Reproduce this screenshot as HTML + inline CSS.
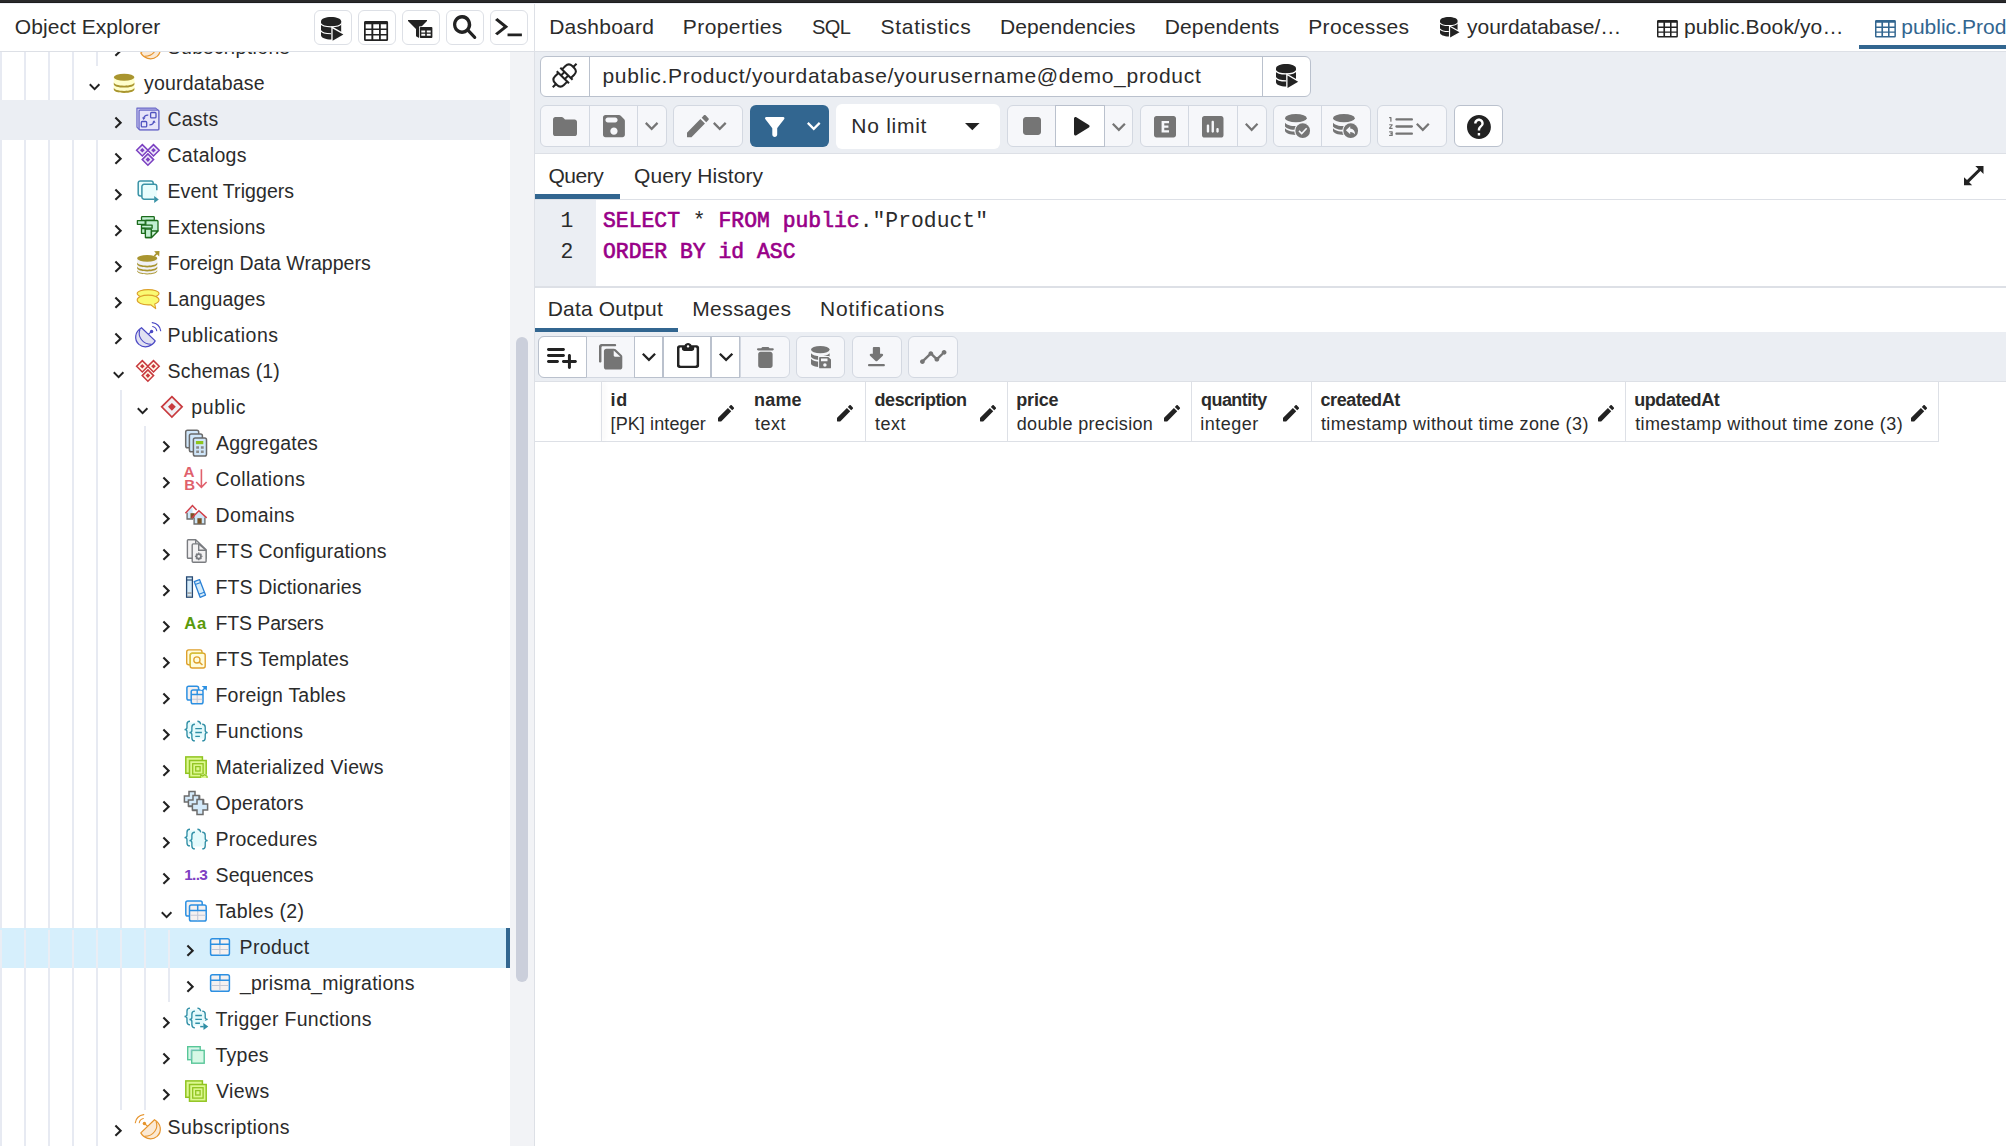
<!DOCTYPE html>
<html lang="en"><head><meta charset="utf-8"><title>pgAdmin 4</title>
<style>
html,body{margin:0;padding:0;background:#fff;}
body{width:2006px;height:1146px;overflow:hidden;position:relative;font-family:"Liberation Sans",sans-serif;color:#222;}
div,span.t,svg.i,i.g{position:absolute;}
span.t{white-space:nowrap;display:block;color:#2b2b2b;}
span.m{font-family:"Liberation Mono",monospace;}
i.g{width:1.8px;display:block;}
svg.i{display:block;overflow:visible;}
svg.ch{fill:none;stroke:#222;stroke-width:1.95;stroke-linecap:butt;stroke-linejoin:miter;z-index:4;}
svg.ti{z-index:4;}
#topbar{left:0;top:0;width:2006px;height:3px;background:linear-gradient(#29292b 0,#29292b 2px,#1d1d1f 2px,#1d1d1f 3px);border-bottom:1px solid #eef0f7;z-index:20;}
#left{left:0;top:0;width:535px;height:1146px;overflow:hidden;}
#tree{left:0;top:52px;width:510px;height:1094px;overflow:hidden;}
#tree>*{margin-top:-52px;}
#lhead{left:0;top:3px;width:534px;height:48px;background:#fff;border-bottom:1px solid #dde0e6;z-index:5;}
#left{border-right:1px solid #dde0e6;width:534px;}
#right{left:0;top:0;width:2006px;height:1146px;}
</style></head>
<body>
<div id="topbar"></div>
<div id="left">
<div id="tree">
<div style="left:0.00px;top:100.00px;width:510.00px;height:39.50px;background:#ebeef3;z-index:2"></div>
<div style="left:0.00px;top:928.00px;width:510.00px;height:40.00px;background:#d6effc;border-right:4px solid #326690;box-sizing:border-box;z-index:2"></div>
<i class="g" style="left:0px;top:29.8px;height:36px;background:#e7eaf2;z-index:1"></i>
<i class="g" style="left:24px;top:29.8px;height:36px;background:#e7eaf2;z-index:1"></i>
<i class="g" style="left:48px;top:29.8px;height:36px;background:#e7eaf2;z-index:1"></i>
<i class="g" style="left:72px;top:29.8px;height:36px;background:#e7eaf2;z-index:1"></i>
<i class="g" style="left:96px;top:29.8px;height:36px;background:#e7eaf2;z-index:1"></i>
<i class="g" style="left:0px;top:65.8px;height:36px;background:#e7eaf2;z-index:1"></i>
<i class="g" style="left:24px;top:65.8px;height:36px;background:#e7eaf2;z-index:1"></i>
<i class="g" style="left:48px;top:65.8px;height:36px;background:#e7eaf2;z-index:1"></i>
<i class="g" style="left:72px;top:65.8px;height:36px;background:#e7eaf2;z-index:1"></i>
<i class="g" style="left:0px;top:137.8px;height:36px;background:#e7eaf2;z-index:1"></i>
<i class="g" style="left:24px;top:137.8px;height:36px;background:#e7eaf2;z-index:1"></i>
<i class="g" style="left:48px;top:137.8px;height:36px;background:#e7eaf2;z-index:1"></i>
<i class="g" style="left:72px;top:137.8px;height:36px;background:#e7eaf2;z-index:1"></i>
<i class="g" style="left:96px;top:137.8px;height:36px;background:#e7eaf2;z-index:1"></i>
<i class="g" style="left:0px;top:173.8px;height:36px;background:#e7eaf2;z-index:1"></i>
<i class="g" style="left:24px;top:173.8px;height:36px;background:#e7eaf2;z-index:1"></i>
<i class="g" style="left:48px;top:173.8px;height:36px;background:#e7eaf2;z-index:1"></i>
<i class="g" style="left:72px;top:173.8px;height:36px;background:#e7eaf2;z-index:1"></i>
<i class="g" style="left:96px;top:173.8px;height:36px;background:#e7eaf2;z-index:1"></i>
<i class="g" style="left:0px;top:209.8px;height:36px;background:#e7eaf2;z-index:1"></i>
<i class="g" style="left:24px;top:209.8px;height:36px;background:#e7eaf2;z-index:1"></i>
<i class="g" style="left:48px;top:209.8px;height:36px;background:#e7eaf2;z-index:1"></i>
<i class="g" style="left:72px;top:209.8px;height:36px;background:#e7eaf2;z-index:1"></i>
<i class="g" style="left:96px;top:209.8px;height:36px;background:#e7eaf2;z-index:1"></i>
<i class="g" style="left:0px;top:245.8px;height:36px;background:#e7eaf2;z-index:1"></i>
<i class="g" style="left:24px;top:245.8px;height:36px;background:#e7eaf2;z-index:1"></i>
<i class="g" style="left:48px;top:245.8px;height:36px;background:#e7eaf2;z-index:1"></i>
<i class="g" style="left:72px;top:245.8px;height:36px;background:#e7eaf2;z-index:1"></i>
<i class="g" style="left:96px;top:245.8px;height:36px;background:#e7eaf2;z-index:1"></i>
<i class="g" style="left:0px;top:281.8px;height:36px;background:#e7eaf2;z-index:1"></i>
<i class="g" style="left:24px;top:281.8px;height:36px;background:#e7eaf2;z-index:1"></i>
<i class="g" style="left:48px;top:281.8px;height:36px;background:#e7eaf2;z-index:1"></i>
<i class="g" style="left:72px;top:281.8px;height:36px;background:#e7eaf2;z-index:1"></i>
<i class="g" style="left:96px;top:281.8px;height:36px;background:#e7eaf2;z-index:1"></i>
<i class="g" style="left:0px;top:317.8px;height:36px;background:#e7eaf2;z-index:1"></i>
<i class="g" style="left:24px;top:317.8px;height:36px;background:#e7eaf2;z-index:1"></i>
<i class="g" style="left:48px;top:317.8px;height:36px;background:#e7eaf2;z-index:1"></i>
<i class="g" style="left:72px;top:317.8px;height:36px;background:#e7eaf2;z-index:1"></i>
<i class="g" style="left:96px;top:317.8px;height:36px;background:#e7eaf2;z-index:1"></i>
<i class="g" style="left:0px;top:353.8px;height:36px;background:#e7eaf2;z-index:1"></i>
<i class="g" style="left:24px;top:353.8px;height:36px;background:#e7eaf2;z-index:1"></i>
<i class="g" style="left:48px;top:353.8px;height:36px;background:#e7eaf2;z-index:1"></i>
<i class="g" style="left:72px;top:353.8px;height:36px;background:#e7eaf2;z-index:1"></i>
<i class="g" style="left:96px;top:353.8px;height:36px;background:#e7eaf2;z-index:1"></i>
<i class="g" style="left:0px;top:389.8px;height:36px;background:#e7eaf2;z-index:1"></i>
<i class="g" style="left:24px;top:389.8px;height:36px;background:#e7eaf2;z-index:1"></i>
<i class="g" style="left:48px;top:389.8px;height:36px;background:#e7eaf2;z-index:1"></i>
<i class="g" style="left:72px;top:389.8px;height:36px;background:#e7eaf2;z-index:1"></i>
<i class="g" style="left:96px;top:389.8px;height:36px;background:#e7eaf2;z-index:1"></i>
<i class="g" style="left:120px;top:389.8px;height:36px;background:#e7eaf2;z-index:1"></i>
<i class="g" style="left:0px;top:425.8px;height:36px;background:#e7eaf2;z-index:1"></i>
<i class="g" style="left:24px;top:425.8px;height:36px;background:#e7eaf2;z-index:1"></i>
<i class="g" style="left:48px;top:425.8px;height:36px;background:#e7eaf2;z-index:1"></i>
<i class="g" style="left:72px;top:425.8px;height:36px;background:#e7eaf2;z-index:1"></i>
<i class="g" style="left:96px;top:425.8px;height:36px;background:#e7eaf2;z-index:1"></i>
<i class="g" style="left:120px;top:425.8px;height:36px;background:#e7eaf2;z-index:1"></i>
<i class="g" style="left:144px;top:425.8px;height:36px;background:#e7eaf2;z-index:1"></i>
<i class="g" style="left:0px;top:461.8px;height:36px;background:#e7eaf2;z-index:1"></i>
<i class="g" style="left:24px;top:461.8px;height:36px;background:#e7eaf2;z-index:1"></i>
<i class="g" style="left:48px;top:461.8px;height:36px;background:#e7eaf2;z-index:1"></i>
<i class="g" style="left:72px;top:461.8px;height:36px;background:#e7eaf2;z-index:1"></i>
<i class="g" style="left:96px;top:461.8px;height:36px;background:#e7eaf2;z-index:1"></i>
<i class="g" style="left:120px;top:461.8px;height:36px;background:#e7eaf2;z-index:1"></i>
<i class="g" style="left:144px;top:461.8px;height:36px;background:#e7eaf2;z-index:1"></i>
<i class="g" style="left:0px;top:497.8px;height:36px;background:#e7eaf2;z-index:1"></i>
<i class="g" style="left:24px;top:497.8px;height:36px;background:#e7eaf2;z-index:1"></i>
<i class="g" style="left:48px;top:497.8px;height:36px;background:#e7eaf2;z-index:1"></i>
<i class="g" style="left:72px;top:497.8px;height:36px;background:#e7eaf2;z-index:1"></i>
<i class="g" style="left:96px;top:497.8px;height:36px;background:#e7eaf2;z-index:1"></i>
<i class="g" style="left:120px;top:497.8px;height:36px;background:#e7eaf2;z-index:1"></i>
<i class="g" style="left:144px;top:497.8px;height:36px;background:#e7eaf2;z-index:1"></i>
<i class="g" style="left:0px;top:533.8px;height:36px;background:#e7eaf2;z-index:1"></i>
<i class="g" style="left:24px;top:533.8px;height:36px;background:#e7eaf2;z-index:1"></i>
<i class="g" style="left:48px;top:533.8px;height:36px;background:#e7eaf2;z-index:1"></i>
<i class="g" style="left:72px;top:533.8px;height:36px;background:#e7eaf2;z-index:1"></i>
<i class="g" style="left:96px;top:533.8px;height:36px;background:#e7eaf2;z-index:1"></i>
<i class="g" style="left:120px;top:533.8px;height:36px;background:#e7eaf2;z-index:1"></i>
<i class="g" style="left:144px;top:533.8px;height:36px;background:#e7eaf2;z-index:1"></i>
<i class="g" style="left:0px;top:569.8px;height:36px;background:#e7eaf2;z-index:1"></i>
<i class="g" style="left:24px;top:569.8px;height:36px;background:#e7eaf2;z-index:1"></i>
<i class="g" style="left:48px;top:569.8px;height:36px;background:#e7eaf2;z-index:1"></i>
<i class="g" style="left:72px;top:569.8px;height:36px;background:#e7eaf2;z-index:1"></i>
<i class="g" style="left:96px;top:569.8px;height:36px;background:#e7eaf2;z-index:1"></i>
<i class="g" style="left:120px;top:569.8px;height:36px;background:#e7eaf2;z-index:1"></i>
<i class="g" style="left:144px;top:569.8px;height:36px;background:#e7eaf2;z-index:1"></i>
<i class="g" style="left:0px;top:605.8px;height:36px;background:#e7eaf2;z-index:1"></i>
<i class="g" style="left:24px;top:605.8px;height:36px;background:#e7eaf2;z-index:1"></i>
<i class="g" style="left:48px;top:605.8px;height:36px;background:#e7eaf2;z-index:1"></i>
<i class="g" style="left:72px;top:605.8px;height:36px;background:#e7eaf2;z-index:1"></i>
<i class="g" style="left:96px;top:605.8px;height:36px;background:#e7eaf2;z-index:1"></i>
<i class="g" style="left:120px;top:605.8px;height:36px;background:#e7eaf2;z-index:1"></i>
<i class="g" style="left:144px;top:605.8px;height:36px;background:#e7eaf2;z-index:1"></i>
<i class="g" style="left:0px;top:641.8px;height:36px;background:#e7eaf2;z-index:1"></i>
<i class="g" style="left:24px;top:641.8px;height:36px;background:#e7eaf2;z-index:1"></i>
<i class="g" style="left:48px;top:641.8px;height:36px;background:#e7eaf2;z-index:1"></i>
<i class="g" style="left:72px;top:641.8px;height:36px;background:#e7eaf2;z-index:1"></i>
<i class="g" style="left:96px;top:641.8px;height:36px;background:#e7eaf2;z-index:1"></i>
<i class="g" style="left:120px;top:641.8px;height:36px;background:#e7eaf2;z-index:1"></i>
<i class="g" style="left:144px;top:641.8px;height:36px;background:#e7eaf2;z-index:1"></i>
<i class="g" style="left:0px;top:677.8px;height:36px;background:#e7eaf2;z-index:1"></i>
<i class="g" style="left:24px;top:677.8px;height:36px;background:#e7eaf2;z-index:1"></i>
<i class="g" style="left:48px;top:677.8px;height:36px;background:#e7eaf2;z-index:1"></i>
<i class="g" style="left:72px;top:677.8px;height:36px;background:#e7eaf2;z-index:1"></i>
<i class="g" style="left:96px;top:677.8px;height:36px;background:#e7eaf2;z-index:1"></i>
<i class="g" style="left:120px;top:677.8px;height:36px;background:#e7eaf2;z-index:1"></i>
<i class="g" style="left:144px;top:677.8px;height:36px;background:#e7eaf2;z-index:1"></i>
<i class="g" style="left:0px;top:713.8px;height:36px;background:#e7eaf2;z-index:1"></i>
<i class="g" style="left:24px;top:713.8px;height:36px;background:#e7eaf2;z-index:1"></i>
<i class="g" style="left:48px;top:713.8px;height:36px;background:#e7eaf2;z-index:1"></i>
<i class="g" style="left:72px;top:713.8px;height:36px;background:#e7eaf2;z-index:1"></i>
<i class="g" style="left:96px;top:713.8px;height:36px;background:#e7eaf2;z-index:1"></i>
<i class="g" style="left:120px;top:713.8px;height:36px;background:#e7eaf2;z-index:1"></i>
<i class="g" style="left:144px;top:713.8px;height:36px;background:#e7eaf2;z-index:1"></i>
<i class="g" style="left:0px;top:749.8px;height:36px;background:#e7eaf2;z-index:1"></i>
<i class="g" style="left:24px;top:749.8px;height:36px;background:#e7eaf2;z-index:1"></i>
<i class="g" style="left:48px;top:749.8px;height:36px;background:#e7eaf2;z-index:1"></i>
<i class="g" style="left:72px;top:749.8px;height:36px;background:#e7eaf2;z-index:1"></i>
<i class="g" style="left:96px;top:749.8px;height:36px;background:#e7eaf2;z-index:1"></i>
<i class="g" style="left:120px;top:749.8px;height:36px;background:#e7eaf2;z-index:1"></i>
<i class="g" style="left:144px;top:749.8px;height:36px;background:#e7eaf2;z-index:1"></i>
<i class="g" style="left:0px;top:785.8px;height:36px;background:#e7eaf2;z-index:1"></i>
<i class="g" style="left:24px;top:785.8px;height:36px;background:#e7eaf2;z-index:1"></i>
<i class="g" style="left:48px;top:785.8px;height:36px;background:#e7eaf2;z-index:1"></i>
<i class="g" style="left:72px;top:785.8px;height:36px;background:#e7eaf2;z-index:1"></i>
<i class="g" style="left:96px;top:785.8px;height:36px;background:#e7eaf2;z-index:1"></i>
<i class="g" style="left:120px;top:785.8px;height:36px;background:#e7eaf2;z-index:1"></i>
<i class="g" style="left:144px;top:785.8px;height:36px;background:#e7eaf2;z-index:1"></i>
<i class="g" style="left:0px;top:821.8px;height:36px;background:#e7eaf2;z-index:1"></i>
<i class="g" style="left:24px;top:821.8px;height:36px;background:#e7eaf2;z-index:1"></i>
<i class="g" style="left:48px;top:821.8px;height:36px;background:#e7eaf2;z-index:1"></i>
<i class="g" style="left:72px;top:821.8px;height:36px;background:#e7eaf2;z-index:1"></i>
<i class="g" style="left:96px;top:821.8px;height:36px;background:#e7eaf2;z-index:1"></i>
<i class="g" style="left:120px;top:821.8px;height:36px;background:#e7eaf2;z-index:1"></i>
<i class="g" style="left:144px;top:821.8px;height:36px;background:#e7eaf2;z-index:1"></i>
<i class="g" style="left:0px;top:857.8px;height:36px;background:#e7eaf2;z-index:1"></i>
<i class="g" style="left:24px;top:857.8px;height:36px;background:#e7eaf2;z-index:1"></i>
<i class="g" style="left:48px;top:857.8px;height:36px;background:#e7eaf2;z-index:1"></i>
<i class="g" style="left:72px;top:857.8px;height:36px;background:#e7eaf2;z-index:1"></i>
<i class="g" style="left:96px;top:857.8px;height:36px;background:#e7eaf2;z-index:1"></i>
<i class="g" style="left:120px;top:857.8px;height:36px;background:#e7eaf2;z-index:1"></i>
<i class="g" style="left:144px;top:857.8px;height:36px;background:#e7eaf2;z-index:1"></i>
<i class="g" style="left:0px;top:893.8px;height:36px;background:#e7eaf2;z-index:1"></i>
<i class="g" style="left:24px;top:893.8px;height:36px;background:#e7eaf2;z-index:1"></i>
<i class="g" style="left:48px;top:893.8px;height:36px;background:#e7eaf2;z-index:1"></i>
<i class="g" style="left:72px;top:893.8px;height:36px;background:#e7eaf2;z-index:1"></i>
<i class="g" style="left:96px;top:893.8px;height:36px;background:#e7eaf2;z-index:1"></i>
<i class="g" style="left:120px;top:893.8px;height:36px;background:#e7eaf2;z-index:1"></i>
<i class="g" style="left:144px;top:893.8px;height:36px;background:#e7eaf2;z-index:1"></i>
<i class="g" style="left:0px;top:929.8px;height:38.2px;background:#eaedf4;z-index:3"></i>
<i class="g" style="left:24px;top:929.8px;height:38.2px;background:#eaedf4;z-index:3"></i>
<i class="g" style="left:48px;top:929.8px;height:38.2px;background:#eaedf4;z-index:3"></i>
<i class="g" style="left:72px;top:929.8px;height:38.2px;background:#eaedf4;z-index:3"></i>
<i class="g" style="left:96px;top:929.8px;height:38.2px;background:#eaedf4;z-index:3"></i>
<i class="g" style="left:120px;top:929.8px;height:38.2px;background:#eaedf4;z-index:3"></i>
<i class="g" style="left:144px;top:929.8px;height:38.2px;background:#eaedf4;z-index:3"></i>
<i class="g" style="left:168px;top:929.8px;height:38.2px;background:#eaedf4;z-index:3"></i>
<i class="g" style="left:0px;top:965.8px;height:36px;background:#e7eaf2;z-index:1"></i>
<i class="g" style="left:24px;top:965.8px;height:36px;background:#e7eaf2;z-index:1"></i>
<i class="g" style="left:48px;top:965.8px;height:36px;background:#e7eaf2;z-index:1"></i>
<i class="g" style="left:72px;top:965.8px;height:36px;background:#e7eaf2;z-index:1"></i>
<i class="g" style="left:96px;top:965.8px;height:36px;background:#e7eaf2;z-index:1"></i>
<i class="g" style="left:120px;top:965.8px;height:36px;background:#e7eaf2;z-index:1"></i>
<i class="g" style="left:144px;top:965.8px;height:36px;background:#e7eaf2;z-index:1"></i>
<i class="g" style="left:168px;top:965.8px;height:36px;background:#e7eaf2;z-index:1"></i>
<i class="g" style="left:0px;top:1001.8px;height:36px;background:#e7eaf2;z-index:1"></i>
<i class="g" style="left:24px;top:1001.8px;height:36px;background:#e7eaf2;z-index:1"></i>
<i class="g" style="left:48px;top:1001.8px;height:36px;background:#e7eaf2;z-index:1"></i>
<i class="g" style="left:72px;top:1001.8px;height:36px;background:#e7eaf2;z-index:1"></i>
<i class="g" style="left:96px;top:1001.8px;height:36px;background:#e7eaf2;z-index:1"></i>
<i class="g" style="left:120px;top:1001.8px;height:36px;background:#e7eaf2;z-index:1"></i>
<i class="g" style="left:144px;top:1001.8px;height:36px;background:#e7eaf2;z-index:1"></i>
<i class="g" style="left:0px;top:1037.8px;height:36px;background:#e7eaf2;z-index:1"></i>
<i class="g" style="left:24px;top:1037.8px;height:36px;background:#e7eaf2;z-index:1"></i>
<i class="g" style="left:48px;top:1037.8px;height:36px;background:#e7eaf2;z-index:1"></i>
<i class="g" style="left:72px;top:1037.8px;height:36px;background:#e7eaf2;z-index:1"></i>
<i class="g" style="left:96px;top:1037.8px;height:36px;background:#e7eaf2;z-index:1"></i>
<i class="g" style="left:120px;top:1037.8px;height:36px;background:#e7eaf2;z-index:1"></i>
<i class="g" style="left:144px;top:1037.8px;height:36px;background:#e7eaf2;z-index:1"></i>
<i class="g" style="left:0px;top:1073.8px;height:36px;background:#e7eaf2;z-index:1"></i>
<i class="g" style="left:24px;top:1073.8px;height:36px;background:#e7eaf2;z-index:1"></i>
<i class="g" style="left:48px;top:1073.8px;height:36px;background:#e7eaf2;z-index:1"></i>
<i class="g" style="left:72px;top:1073.8px;height:36px;background:#e7eaf2;z-index:1"></i>
<i class="g" style="left:96px;top:1073.8px;height:36px;background:#e7eaf2;z-index:1"></i>
<i class="g" style="left:120px;top:1073.8px;height:36px;background:#e7eaf2;z-index:1"></i>
<i class="g" style="left:144px;top:1073.8px;height:36px;background:#e7eaf2;z-index:1"></i>
<i class="g" style="left:0px;top:1109.8px;height:36px;background:#e7eaf2;z-index:1"></i>
<i class="g" style="left:24px;top:1109.8px;height:36px;background:#e7eaf2;z-index:1"></i>
<i class="g" style="left:48px;top:1109.8px;height:36px;background:#e7eaf2;z-index:1"></i>
<i class="g" style="left:72px;top:1109.8px;height:36px;background:#e7eaf2;z-index:1"></i>
<i class="g" style="left:96px;top:1109.8px;height:36px;background:#e7eaf2;z-index:1"></i>
<svg class="i ch" viewBox="0 0 8 12" style="left:114.1px;top:44.0px;width:8.6px;height:13.4px"><path d="M1.3 1.2 6.2 6 1.3 10.8"/></svg>
<svg class="i ti" viewBox="0 0 24 24" style="left:136px;top:35px;width:24px;height:24px"><g transform="translate(24 0) scale(-1 1)"><path d="M5.5 4.7 19.2 17.9C16.5 22.9 9 26.3 2.9 21.4-2.2 16.6-1.2 8.6 5.5 4.7z" fill="#fbe9d4" stroke="#e6942c" stroke-width="1.2" stroke-linejoin="round"/><path d="M4 6.2C1.2 13.5 6.5 21.4 15.6 21.3" fill="none" stroke="#e6942c" stroke-width="1.1"/><path d="M12.4 11.2 15.2 8.9" stroke="#e6942c" stroke-width="1.2"/><circle cx="15.6" cy="8.5" r="1.7" fill="#e6942c"/><path d="M16.7 3.5c2.3.6 3.7 2.1 4 4.3M16.2-.4c4.6.6 7.8 3.6 8.5 8.2" fill="none" stroke="#e6942c" stroke-width="1.1" stroke-linecap="round"/></g></svg>
<span class="t" style="left:167.61px;top:38.00px;font-size:19.5px;line-height:19.5px;letter-spacing:0.403px;z-index:4;">Subscriptions</span>
<svg class="i ch" viewBox="0 0 12 8" style="left:87.5px;top:82.6px;width:13.2px;height:8px"><path d="M1.2 1.3 6 6.1 10.8 1.3"/></svg>
<svg class="i ti" viewBox="0 0 24 24" style="left:112px;top:71px;width:24px;height:24px"><path d="M1.8 6.2v12.3c0 1.9 4.6 3.4 10.3 3.4s10.3-1.500 10.300-3.400V6.200z" fill="#ffffcc"/><ellipse cx="12.100" cy="6.200" rx="10.300" ry="3.500" fill="#a9952f"/><path d="M1.8 11.300c0 1.900 4.600 3.400 10.300 3.400s10.300-1.500 10.300-3.400v1.900c0 1.900-4.600 3.400-10.300 3.400S1.800 15.100 1.800 13.200zM1.800 16.600c0 1.900 4.600 3.400 10.300 3.400s10.300-1.500 10.300-3.400v1.900c0 1.900-4.600 3.400-10.300 3.400S1.800 20.400 1.800 18.500z" fill="#a9952f"/></svg>
<span class="t" style="left:143.95px;top:74.00px;font-size:19.5px;line-height:19.5px;letter-spacing:0.231px;z-index:4;">yourdatabase</span>
<svg class="i ch" viewBox="0 0 8 12" style="left:114.1px;top:116.0px;width:8.6px;height:13.4px"><path d="M1.3 1.2 6.2 6 1.3 10.8"/></svg>
<svg class="i ti" viewBox="0 0 24 24" style="left:136px;top:107px;width:24px;height:24px"><path d="M.9 1.100h18.800l3.100 2.600v19h-19.400l-2.500-2.600z" fill="#c9c6ef" stroke="#6a68c8" stroke-width="1.100" stroke-linejoin="round"/><rect x="3.100" y="3.100" width="19.700" height="19.700" rx="1" fill="#e6e4fa" stroke="#6a68c8" stroke-width="1.200"/><rect x="14.600" y="5.500" width="5.400" height="5.400" rx="1" fill="none" stroke="#4f52c0" stroke-width="1.300"/><rect x="5.300" y="14.500" width="5.400" height="5.400" rx="1" fill="none" stroke="#4f52c0" stroke-width="1.300"/><path d="M12.300 8.100c-2.600-.2-4.200 1-4.700 3.300M13.400 17.900c2.500.1 4-1 4.600-3.200" fill="none" stroke="#4f52c0" stroke-width="1.300"/><path d="M6 10.400 7.600 12.900 9.600 10.600zM19.700 15.700 18.100 13.200 16.100 15.500z" fill="#4f52c0"/></svg>
<span class="t" style="left:167.51px;top:110.00px;font-size:19.5px;line-height:19.5px;letter-spacing:0.212px;z-index:4;">Casts</span>
<svg class="i ch" viewBox="0 0 8 12" style="left:114.1px;top:152.0px;width:8.6px;height:13.4px"><path d="M1.3 1.2 6.2 6 1.3 10.8"/></svg>
<svg class="i ti" viewBox="0 0 24 24" style="left:136px;top:143px;width:24px;height:24px"><path d="M6.3 1.5999999999999996L12.0 7.3L6.3 13.0L0.5999999999999996 7.3z" fill="#ece6fa" stroke="#7b40c1" stroke-width="1.5" stroke-linejoin="miter"/><path d="M6.3 5.0L8.6 7.3L6.3 9.6L4.0 7.3z" fill="#7b40c1"/><path d="M17.5 1.5999999999999996L23.2 7.3L17.5 13.0L11.8 7.3z" fill="#ece6fa" stroke="#7b40c1" stroke-width="1.5" stroke-linejoin="miter"/><path d="M17.5 5.0L19.8 7.3L17.5 9.6L15.2 7.3z" fill="#7b40c1"/><path d="M11.9 10.900000000000002L17.6 16.6L11.9 22.3L6.2 16.6z" fill="#ece6fa" stroke="#7b40c1" stroke-width="1.5" stroke-linejoin="miter"/><path d="M11.9 14.3L14.2 16.6L11.9 18.900000000000002L9.600000000000001 16.6z" fill="#7b40c1"/></svg>
<span class="t" style="left:167.51px;top:146.00px;font-size:19.5px;line-height:19.5px;letter-spacing:0.290px;z-index:4;">Catalogs</span>
<svg class="i ch" viewBox="0 0 8 12" style="left:114.1px;top:188.0px;width:8.6px;height:13.4px"><path d="M1.3 1.2 6.2 6 1.3 10.8"/></svg>
<svg class="i ti" viewBox="0 0 24 24" style="left:136px;top:179px;width:24px;height:24px"><rect x="2.200" y="1.900" width="15" height="15.100" rx="2.200" fill="#e8fdfd" stroke="#3a93a7" stroke-width="1.500"/><rect x="5.900" y="5.300" width="14.900" height="14.900" rx="2.200" fill="#e8fdfd"/><path d="M20.800 11.300V7.500a2.200 2.200 0 0 0-2.200-2.200H8.100a2.200 2.200 0 0 0-2.200 2.200V18a2.200 2.200 0 0 0 2.200 2.200h10.400" fill="none" stroke="#3a93a7" stroke-width="1.500"/><path d="M18.200 16.900 22.800 20.400 18.200 23.900z" fill="#3a93a7"/></svg>
<span class="t" style="left:167.50px;top:182.00px;font-size:19.5px;line-height:19.5px;letter-spacing:0.068px;z-index:4;">Event Triggers</span>
<svg class="i ch" viewBox="0 0 8 12" style="left:114.1px;top:224.0px;width:8.6px;height:13.4px"><path d="M1.3 1.2 6.2 6 1.3 10.8"/></svg>
<svg class="i ti" viewBox="0 0 24 24" style="left:136px;top:215px;width:24px;height:24px"><g fill="#c2efd2" stroke="#1c6b1c" stroke-width="1.300" stroke-linejoin="round"><rect x="5.500" y="1.600" width="12.800" height="3.700" rx=".8"/><path d="M9.800 5.500h11.200q1 0 1 1v9.300l-6.700 6.700h-5.500z"/><rect x="1.400" y="5.700" width="7.800" height="3.600"/><rect x="5.500" y="10.100" width="10.600" height="3.100"/><rect x="5.500" y="13.500" width="3.700" height="4.800"/><rect x="9.400" y="14.100" width="5.900" height="8.400"/><path d="M15.500 22.500v-6.500h6.500z" fill="#d4f6e0"/></g></svg>
<span class="t" style="left:167.50px;top:218.00px;font-size:19.5px;line-height:19.5px;letter-spacing:0.269px;z-index:4;">Extensions</span>
<svg class="i ch" viewBox="0 0 8 12" style="left:114.1px;top:260.0px;width:8.6px;height:13.4px"><path d="M1.3 1.2 6.2 6 1.3 10.8"/></svg>
<svg class="i ti" viewBox="0 0 24 24" style="left:136px;top:251px;width:24px;height:24px"><path d="M1.100 7.300v11.800c0 1.900 4.500 3.400 10.100 3.400s10.100-1.500 10.100-3.400V7.300z" fill="#f1f1f6"/><ellipse cx="11.200" cy="7.300" rx="10.100" ry="3.400" fill="#a9952f"/><path d="M1.100 11.300c0 1.900 4.500 3.400 10.100 3.400s10.100-1.500 10.100-3.400v1.700c0 1.900-4.500 3.400-10.100 3.400S1.100 14.900 1.100 13zM1.100 15.300c0 1.900 4.500 3.400 10.100 3.400s10.100-1.500 10.100-3.400v1.700c0 1.900-4.500 3.400-10.100 3.400s-10.100-1.500-10.100-3.400zM1.100 19c0 1.900 4.500 3.400 10.100 3.400s10.100-1.500 10.100-3.400v1c0 1.900-4.500 3.400-10.100 3.400S1.100 21.900 1.100 20z" fill="#a9952f"/><path d="M18.400 5 22 1.400" stroke="#a9952f" stroke-width="1.600"/><path d="M18.100.2 23.500 0 23.200 5.600z" fill="#a9952f"/></svg>
<span class="t" style="left:167.50px;top:254.00px;font-size:19.5px;line-height:19.5px;letter-spacing:0.050px;z-index:4;">Foreign Data Wrappers</span>
<svg class="i ch" viewBox="0 0 8 12" style="left:114.1px;top:296.0px;width:8.6px;height:13.4px"><path d="M1.3 1.2 6.2 6 1.3 10.8"/></svg>
<svg class="i ti" viewBox="0 0 24 24" style="left:136px;top:287px;width:24px;height:24px"><ellipse cx="12.100" cy="6.600" rx="10.900" ry="4" fill="#fafa72" stroke="#dca02a" stroke-width="1.100"/><path d="M12.100 8.100c6 0 10.900 2.200 10.900 4.900 0 1.600-1.700 3-4.300 3.900l1 4.700-5-3.900c-.8.100-1.700.2-2.600.2-6 0-10.900-2.200-10.900-4.900s4.900-4.900 10.900-4.900z" fill="#fafa72" stroke="#dca02a" stroke-width="1.100" stroke-linejoin="round"/></svg>
<span class="t" style="left:167.50px;top:290.00px;font-size:19.5px;line-height:19.5px;letter-spacing:0.162px;z-index:4;">Languages</span>
<svg class="i ch" viewBox="0 0 8 12" style="left:114.1px;top:332.0px;width:8.6px;height:13.4px"><path d="M1.3 1.2 6.2 6 1.3 10.8"/></svg>
<svg class="i ti" viewBox="0 0 24 24" style="left:136px;top:323px;width:24px;height:24px"><g><path d="M5.5 4.7 19.2 17.9C16.5 22.9 9 26.3 2.9 21.4-2.2 16.6-1.2 8.6 5.5 4.7z" fill="#e1e1f2" stroke="#4a48c4" stroke-width="1.2" stroke-linejoin="round"/><path d="M4 6.2C1.2 13.5 6.5 21.4 15.6 21.3" fill="none" stroke="#4a48c4" stroke-width="1.1"/><path d="M12.4 11.2 15.2 8.9" stroke="#4a48c4" stroke-width="1.2"/><circle cx="15.6" cy="8.5" r="1.7" fill="#4a48c4"/><path d="M16.7 3.5c2.3.6 3.7 2.1 4 4.3M16.2-.4c4.6.6 7.8 3.6 8.5 8.2" fill="none" stroke="#4a48c4" stroke-width="1.1" stroke-linecap="round"/></g></svg>
<span class="t" style="left:167.50px;top:326.00px;font-size:19.5px;line-height:19.5px;letter-spacing:0.487px;z-index:4;">Publications</span>
<svg class="i ch" viewBox="0 0 12 8" style="left:111.5px;top:370.6px;width:13.2px;height:8px"><path d="M1.2 1.3 6 6.1 10.8 1.3"/></svg>
<svg class="i ti" viewBox="0 0 24 24" style="left:136px;top:359px;width:24px;height:24px"><path d="M6.3 1.5999999999999996L12.0 7.3L6.3 13.0L0.5999999999999996 7.3z" fill="#fff6e6" stroke="#c83a3e" stroke-width="1.5" stroke-linejoin="miter"/><path d="M6.3 5.0L8.6 7.3L6.3 9.6L4.0 7.3z" fill="#c83a3e"/><path d="M17.5 1.5999999999999996L23.2 7.3L17.5 13.0L11.8 7.3z" fill="#fff6e6" stroke="#c83a3e" stroke-width="1.5" stroke-linejoin="miter"/><path d="M17.5 5.0L19.8 7.3L17.5 9.6L15.2 7.3z" fill="#c83a3e"/><path d="M11.9 10.900000000000002L17.6 16.6L11.9 22.3L6.2 16.6z" fill="#fff6e6" stroke="#c83a3e" stroke-width="1.5" stroke-linejoin="miter"/><path d="M11.9 14.3L14.2 16.6L11.9 18.900000000000002L9.600000000000001 16.6z" fill="#c83a3e"/></svg>
<span class="t" style="left:167.61px;top:362.00px;font-size:19.5px;line-height:19.5px;letter-spacing:0.166px;z-index:4;">Schemas (1)</span>
<svg class="i ch" viewBox="0 0 12 8" style="left:135.5px;top:406.6px;width:13.2px;height:8px"><path d="M1.2 1.3 6 6.1 10.8 1.3"/></svg>
<svg class="i ti" viewBox="0 0 24 24" style="left:160px;top:395px;width:24px;height:24px"><path d="M11.9 1.6000000000000014L22.1 11.8L11.9 22.0L1.700000000000001 11.8z" fill="#f1f1f5" stroke="#c83a3e" stroke-width="1.7" stroke-linejoin="miter"/><path d="M11.9 7.9L15.8 11.8L11.9 15.700000000000001L8.0 11.8z" fill="#c83a3e"/></svg>
<span class="t" style="left:191.34px;top:398.00px;font-size:19.5px;line-height:19.5px;letter-spacing:0.644px;z-index:4;">public</span>
<svg class="i ch" viewBox="0 0 8 12" style="left:162.1px;top:440.0px;width:8.6px;height:13.4px"><path d="M1.3 1.2 6.2 6 1.3 10.8"/></svg>
<svg class="i ti" viewBox="0 0 24 24" style="left:184px;top:431px;width:24px;height:24px"><g fill="#cfe6fa" stroke="#6a6a6a" stroke-width="1.500"><rect x="1.700" y="-.8" width="13" height="17.500" rx="1.800"/><rect x="5.400" y="2.900" width="13" height="17.800" rx="1.800"/><rect x="9.400" y="6.900" width="13.100" height="18.100" rx="1.800"/></g><rect x="11.900" y="10" width="7.400" height="3.200" fill="#8dc41e"/><path d="M12.200 15.200h2.800v2.500h-2.800zM16.900 15.200h2.800v2.500h-2.800zM12.200 19.400h2.800v2.500h-2.800zM16.900 19.400h2.800v2.500h-2.800z" fill="#8a8a8a"/></svg>
<span class="t" style="left:215.96px;top:434.00px;font-size:19.5px;line-height:19.5px;letter-spacing:0.234px;z-index:4;">Aggregates</span>
<svg class="i ch" viewBox="0 0 8 12" style="left:162.1px;top:476.0px;width:8.6px;height:13.4px"><path d="M1.3 1.2 6.2 6 1.3 10.8"/></svg>
<svg class="i ti" viewBox="0 0 24 24" style="left:184px;top:467px;width:24px;height:24px"><text x="-.4" y="10" font-family="Liberation Sans,sans-serif" font-weight="700" font-size="15.300" fill="#e0606c">A</text><text x=".2" y="22.900" font-family="Liberation Sans,sans-serif" font-weight="700" font-size="15" fill="#e0606c">B</text><path d="M17.400 2.200V20M12.200 15 17.400 20.400 22.600 15" fill="none" stroke="#e0606c" stroke-width="1.600"/></svg>
<span class="t" style="left:215.51px;top:470.00px;font-size:19.5px;line-height:19.5px;letter-spacing:0.419px;z-index:4;">Collations</span>
<svg class="i ch" viewBox="0 0 8 12" style="left:162.1px;top:512.0px;width:8.6px;height:13.4px"><path d="M1.3 1.2 6.2 6 1.3 10.8"/></svg>
<svg class="i ti" viewBox="0 0 24 24" style="left:184px;top:503px;width:24px;height:24px"><path d="M3.100 9.400V16h5.500V9.400L8.400 4z" fill="#cde6f8"/><path d="M3.100 9.800V16h6" fill="none" stroke="#6e6e6e" stroke-width="1.400"/><rect x="6.500" y="10.200" width="4.200" height="5.200" fill="#7a5426"/><path d="M1.400 10.200 8.450 2.600 12.600 7" fill="none" stroke="#d0404a" stroke-width="1.500"/><path d="M10.100 14.200 14.900 8.700 20.900 14.200v6.800H10.100z" fill="#cde6f8"/><path d="M10.100 14.600V21h10.800v-6.400" fill="none" stroke="#6e6e6e" stroke-width="1.400"/><rect x="13.400" y="15.200" width="4.300" height="5.500" fill="#7a5426"/><path d="M7.900 15 14.900 7.700 22.700 14.900" fill="none" stroke="#d0404a" stroke-width="1.500"/></svg>
<span class="t" style="left:215.50px;top:506.00px;font-size:19.5px;line-height:19.5px;letter-spacing:0.360px;z-index:4;">Domains</span>
<svg class="i ch" viewBox="0 0 8 12" style="left:162.1px;top:548.0px;width:8.6px;height:13.4px"><path d="M1.3 1.2 6.2 6 1.3 10.8"/></svg>
<svg class="i ti" viewBox="0 0 24 24" style="left:184px;top:539px;width:24px;height:24px"><path d="M4.200.7h7.500l10.400 10v8.500H4.200q-.8 0-.8-.8V1.500q0-.8.800-.8z" fill="#f3f2f3" stroke="#7a7c80" stroke-width="1.400" stroke-linejoin="round"/><path d="M9.200 4.900h5.500l7.400 6.300v11q0 1-1 1H9.200q-1 0-1-1V5.900q0-1 1-1z" fill="#f3f2f3" stroke="#7a7c80" stroke-width="1.400" stroke-linejoin="round"/><path d="M11.700.9v3.800M14.700 4.900v6.300h7.300" fill="none" stroke="#7a7c80" stroke-width="1.400"/><circle cx="14.7" cy="17.4" r="2.23" fill="none" stroke="#7a7c80" stroke-width="1.80"/><path d="M17.40 17.40L18.48 17.40M16.61 19.31L17.37 20.07M14.70 20.10L14.70 21.18M12.79 19.31L12.03 20.07M12.00 17.40L10.92 17.40M12.79 15.49L12.03 14.73M14.70 14.70L14.70 13.62M16.61 15.49L17.37 14.73" stroke="#7a7c80" stroke-width="1.350" fill="none"/></svg>
<span class="t" style="left:215.50px;top:542.00px;font-size:19.5px;line-height:19.5px;letter-spacing:0.172px;z-index:4;">FTS Configurations</span>
<svg class="i ch" viewBox="0 0 8 12" style="left:162.1px;top:584.0px;width:8.6px;height:13.4px"><path d="M1.3 1.2 6.2 6 1.3 10.8"/></svg>
<svg class="i ti" viewBox="0 0 24 24" style="left:184px;top:575px;width:24px;height:24px"><rect x="2.600" y="1.900" width="5.800" height="20.300" fill="#d6ecfa" stroke="#274a74" stroke-width="1.300"/><path d="M2.600 5h5.800" stroke="#274a74" stroke-width="1.100"/><rect x="3.300" y="17.300" width="4.400" height="1.500" fill="#9c9c9c"/><rect x="3.300" y="20.700" width="4.400" height="1" fill="#9c9c9c"/><path d="M10.200 6.600 15.500 4.600 21.500 20.100 16.100 22.300z" fill="#d6ecfa" stroke="#2a80d6" stroke-width="1.300" stroke-linejoin="round"/><path d="M11.300 9.600 16.700 7.600M15 19.300 20.300 17.200" stroke="#2a80d6" stroke-width="1.100"/></svg>
<span class="t" style="left:215.50px;top:578.00px;font-size:19.5px;line-height:19.5px;letter-spacing:0.119px;z-index:4;">FTS Dictionaries</span>
<svg class="i ch" viewBox="0 0 8 12" style="left:162.1px;top:620.0px;width:8.6px;height:13.4px"><path d="M1.3 1.2 6.2 6 1.3 10.8"/></svg>
<svg class="i ti" viewBox="0 0 24 24" style="left:184px;top:611px;width:24px;height:24px"><text x=".3" y="17.900" font-family="Liberation Sans,sans-serif" font-weight="700" font-size="16.600" letter-spacing=".7" fill="#5a9a0a">Aa</text></svg>
<span class="t" style="left:215.50px;top:614.00px;font-size:19.5px;line-height:19.5px;letter-spacing:-0.123px;z-index:4;">FTS Parsers</span>
<svg class="i ch" viewBox="0 0 8 12" style="left:162.1px;top:656.0px;width:8.6px;height:13.4px"><path d="M1.3 1.2 6.2 6 1.3 10.8"/></svg>
<svg class="i ti" viewBox="0 0 24 24" style="left:184px;top:647px;width:24px;height:24px"><rect x="2.700" y="2.900" width="15.300" height="14.800" rx="2" fill="#fffcdc" stroke="#dea02c" stroke-width="1.400"/><rect x="6.200" y="6.200" width="15" height="14.800" rx="2" fill="#fffcdc" stroke="#dea02c" stroke-width="1.400"/><path d="M6.200 19V8.200q0-2 2-2h11" fill="none" stroke="#d6c23c" stroke-width="1.400"/><circle cx="12.900" cy="12.900" r="3.100" fill="none" stroke="#dea02c" stroke-width="1.300"/><path d="M15.200 15.100 18.500 18" stroke="#dea02c" stroke-width="1.400"/></svg>
<span class="t" style="left:215.50px;top:650.00px;font-size:19.5px;line-height:19.5px;letter-spacing:0.203px;z-index:4;">FTS Templates</span>
<svg class="i ch" viewBox="0 0 8 12" style="left:162.1px;top:692.0px;width:8.6px;height:13.4px"><path d="M1.3 1.2 6.2 6 1.3 10.8"/></svg>
<svg class="i ti" viewBox="0 0 24 24" style="left:184px;top:683px;width:24px;height:24px"><rect x="2.900" y="3.200" width="11.700" height="13.800" rx="1.800" fill="#f6f0ee" stroke="#2c90e2" stroke-width="1.500"/><rect x="7.200" y="6.900" width="11.800" height="13.800" rx="1.800" fill="#f6f0ee" stroke="#2c90e2" stroke-width="1.500"/><path d="M13.200 11.400V20M8 16.200h10.300" stroke="#c3c8d6" stroke-width="1.100"/><path d="M13.200 7V11.400M7.200 11.400H19" stroke="#2c90e2" stroke-width="1.500"/><path d="M16.400 6.900 17.200 3.600 19.700 6.600" fill="#fff"/><path d="M18.800 7.200 21.800 4.100" stroke="#2c90e2" stroke-width="1.500"/><path d="M17.700 3.100 23 2.900 22.800 7.800z" fill="#2c90e2"/></svg>
<span class="t" style="left:215.50px;top:686.00px;font-size:19.5px;line-height:19.5px;letter-spacing:0.212px;z-index:4;">Foreign Tables</span>
<svg class="i ch" viewBox="0 0 8 12" style="left:162.1px;top:728.0px;width:8.6px;height:13.4px"><path d="M1.3 1.2 6.2 6 1.3 10.8"/></svg>
<svg class="i ti" viewBox="0 0 24 24" style="left:184px;top:719px;width:24px;height:24px"><g transform="translate(0 0)"><path d="M3 3.500h11l2 3h4.500v13h-13v-3H3z" fill="#e4fafc"/><path d="M6 2.2q-3.0250000000000004 0 -3.0250000000000004 3v3.35q0 2 -2.47 2q2.47 0 2.47 2v3.35q0 3 3.0250000000000004 3M13.4 2.2q3 0 3.300 3.200" fill="none" stroke="#2f8fa6" stroke-width="1.350"/><path d="M10.9 5.2q-3.0250000000000004 0 -3.0250000000000004 3v3.35q0 2 -2.47 2q2.47 0 2.47 2v3.35q0 3 3.0250000000000004 3" fill="none" stroke="#2f8fa6" stroke-width="1.350"/><path d="M18.2 5.2q3.0250000000000004 0 3.0250000000000004 3v3.35q0 2 2.47 2q-2.47 0 -2.47 2v3.35q0 3 -3.0250000000000004 3" fill="none" stroke="#2f8fa6" stroke-width="1.350"/><path d="M11.3 9.600h6.600M11.300 13.500h6.600M11.300 17.400h4.600" stroke="#2f8fa6" stroke-width="1.400" fill="none"/></g></svg>
<span class="t" style="left:215.50px;top:722.00px;font-size:19.5px;line-height:19.5px;letter-spacing:0.370px;z-index:4;">Functions</span>
<svg class="i ch" viewBox="0 0 8 12" style="left:162.1px;top:764.0px;width:8.6px;height:13.4px"><path d="M1.3 1.2 6.2 6 1.3 10.8"/></svg>
<svg class="i ti" viewBox="0 0 24 24" style="left:184px;top:755px;width:24px;height:24px"><rect x="1.8" y="1.900" width="16.600" height="16.400" fill="#dcf890" stroke="#90c420" stroke-width="1.5"/><rect x="5.500" y="5.500" width="16.700" height="16.700" fill="#dcf890" stroke="#90c420" stroke-width="1.5"/><rect x="8.700" y="8.700" width="10.400" height="10.400" fill="none" stroke="#90c420" stroke-width="1.3"/><rect x="11.700" y="11.600" width="4.400" height="4.400" fill="none" stroke="#90c420" stroke-width="1.3"/><path d="M16.800 19.700h6.300v3.500h-6.300z" fill="#fff"/><path d="M16.700 23v-3.300l2 1.300 2-1.300 2.400 1.500V23" fill="#dcf890" stroke="#90c420" stroke-width="1.100"/></svg>
<span class="t" style="left:215.50px;top:758.00px;font-size:19.5px;line-height:19.5px;letter-spacing:0.341px;z-index:4;">Materialized Views</span>
<svg class="i ch" viewBox="0 0 8 12" style="left:162.1px;top:800.0px;width:8.6px;height:13.4px"><path d="M1.3 1.2 6.2 6 1.3 10.8"/></svg>
<svg class="i ti" viewBox="0 0 24 24" style="left:184px;top:791px;width:24px;height:24px"><path d="M5 0.40000000000000036h6v4.600h4.600v6h-4.600v4.600h-6v-4.600h-4.600v-6h4.600z" fill="#d4eafa" stroke="#6c6c6c" stroke-width="1.500"/><path d="M9 4.4h6v4.600h4.600v6h-4.600v4.600h-6v-4.600h-4.600v-6h4.600z" fill="#d4eafa" stroke="#6c6c6c" stroke-width="1.500"/><path d="M13 8.4h6v4.600h4.600v6h-4.600v4.600h-6v-4.600h-4.600v-6h4.600z" fill="#d4eafa" stroke="#6c6c6c" stroke-width="1.500"/></svg>
<span class="t" style="left:215.58px;top:794.00px;font-size:19.5px;line-height:19.5px;letter-spacing:0.153px;z-index:4;">Operators</span>
<svg class="i ch" viewBox="0 0 8 12" style="left:162.1px;top:836.0px;width:8.6px;height:13.4px"><path d="M1.3 1.2 6.2 6 1.3 10.8"/></svg>
<svg class="i ti" viewBox="0 0 24 24" style="left:184px;top:827px;width:24px;height:24px"><g transform="translate(0 0)"><path d="M3 3.500h11l2 3h4.500v13h-13v-3H3z" fill="#e4fafc"/><path d="M6 2.2q-3.0250000000000004 0 -3.0250000000000004 3v3.35q0 2 -2.47 2q2.47 0 2.47 2v3.35q0 3 3.0250000000000004 3M13.4 2.2q3 0 3.300 3.200" fill="none" stroke="#2f8fa6" stroke-width="1.350"/><path d="M10.9 5.2q-3.0250000000000004 0 -3.0250000000000004 3v3.35q0 2 -2.47 2q2.47 0 2.47 2v3.35q0 3 3.0250000000000004 3" fill="none" stroke="#2f8fa6" stroke-width="1.350"/><path d="M18.2 5.2q3.0250000000000004 0 3.0250000000000004 3v3.35q0 2 2.47 2q-2.47 0 -2.47 2v3.35q0 3 -3.0250000000000004 3" fill="none" stroke="#2f8fa6" stroke-width="1.350"/></g></svg>
<span class="t" style="left:215.50px;top:830.00px;font-size:19.5px;line-height:19.5px;letter-spacing:0.232px;z-index:4;">Procedures</span>
<svg class="i ch" viewBox="0 0 8 12" style="left:162.1px;top:872.0px;width:8.6px;height:13.4px"><path d="M1.3 1.2 6.2 6 1.3 10.8"/></svg>
<svg class="i ti" viewBox="0 0 24 24" style="left:184px;top:863px;width:24px;height:24px"><text x=".3" y="16.900" font-family="Liberation Sans,sans-serif" font-weight="700" font-size="15.400" letter-spacing="-.750" fill="#7e40c2">1..3</text></svg>
<span class="t" style="left:215.61px;top:866.00px;font-size:19.5px;line-height:19.5px;letter-spacing:0.039px;z-index:4;">Sequences</span>
<svg class="i ch" viewBox="0 0 12 8" style="left:159.5px;top:910.6px;width:13.2px;height:8px"><path d="M1.2 1.3 6 6.1 10.8 1.3"/></svg>
<svg class="i ti" viewBox="0 0 24 24" style="left:184px;top:899px;width:24px;height:24px"><rect x="1.800" y="1.900" width="16.400" height="15.100" rx="1.800" fill="#f5f1f0" stroke="#2c90e2" stroke-width="1.500"/><rect x="5.5" y="5.9" width="16.7" height="16.1" rx="1.8" fill="#f5f1f0" stroke="#2c90e2" stroke-width="1.5"/><path d="M13.7 11.4V21.3M6.2 16.3H21.5" stroke="#c3c8d6" stroke-width="1.1" fill="none"/><path d="M13.7 5.9V11.4M5.5 11.4H22.2" stroke="#2c90e2" stroke-width="1.5" fill="none"/></svg>
<span class="t" style="left:215.56px;top:902.00px;font-size:19.5px;line-height:19.5px;letter-spacing:0.314px;z-index:4;">Tables (2)</span>
<svg class="i ch" viewBox="0 0 8 12" style="left:186.1px;top:944.0px;width:8.6px;height:13.4px"><path d="M1.3 1.2 6.2 6 1.3 10.8"/></svg>
<svg class="i ti" viewBox="0 0 24 24" style="left:208px;top:935px;width:24px;height:24px"><rect x="2.6" y="3.7" width="18.799999999999997" height="16.5" rx="1.8" fill="#f5f1f0" stroke="#2c90e2" stroke-width="1.5"/><path d="M11.9 9.2V19.5M3.3 14.5H20.7" stroke="#c3c8d6" stroke-width="1.1" fill="none"/><path d="M11.9 3.7V9.2M2.6 9.2H21.4" stroke="#2c90e2" stroke-width="1.5" fill="none"/></svg>
<span class="t" style="left:239.50px;top:938.00px;font-size:19.5px;line-height:19.5px;letter-spacing:0.407px;z-index:4;">Product</span>
<svg class="i ch" viewBox="0 0 8 12" style="left:186.1px;top:980.0px;width:8.6px;height:13.4px"><path d="M1.3 1.2 6.2 6 1.3 10.8"/></svg>
<svg class="i ti" viewBox="0 0 24 24" style="left:208px;top:971px;width:24px;height:24px"><rect x="2.6" y="3.7" width="18.799999999999997" height="16.5" rx="1.8" fill="#f5f1f0" stroke="#2c90e2" stroke-width="1.5"/><path d="M11.9 9.2V19.5M3.3 14.5H20.7" stroke="#c3c8d6" stroke-width="1.1" fill="none"/><path d="M11.9 3.7V9.2M2.6 9.2H21.4" stroke="#2c90e2" stroke-width="1.5" fill="none"/></svg>
<span class="t" style="left:239.90px;top:974.00px;font-size:19.5px;line-height:19.5px;letter-spacing:0.256px;z-index:4;">_prisma_migrations</span>
<svg class="i ch" viewBox="0 0 8 12" style="left:162.1px;top:1016.0px;width:8.6px;height:13.4px"><path d="M1.3 1.2 6.2 6 1.3 10.8"/></svg>
<svg class="i ti" viewBox="0 0 24 24" style="left:184px;top:1007px;width:24px;height:24px"><g transform="translate(0 -1.1)"><path d="M3 3.500h11l2 3h4.500v13h-13v-3H3z" fill="#e4fafc"/><path d="M6 2.2q-3.0250000000000004 0 -3.0250000000000004 3v3.35q0 2 -2.47 2q2.47 0 2.47 2v3.35q0 3 3.0250000000000004 3M13.4 2.2q3 0 3.300 3.200" fill="none" stroke="#2f8fa6" stroke-width="1.350"/><path d="M10.9 5.2q-3.0250000000000004 0 -3.0250000000000004 3v3.35q0 2 -2.47 2q2.47 0 2.47 2v3.35q0 3 3.0250000000000004 3" fill="none" stroke="#2f8fa6" stroke-width="1.350"/><path d="M18.2 5.200q3 0 3 3v3.300q0 2 2.500 2q-2 0-2.400 1.200" fill="none" stroke="#2f8fa6" stroke-width="1.350"/><path d="M16.2 20.700h3.500" stroke="#2f8fa6" stroke-width="1.500"/><path d="M19.300 17.200 24.300 20.700 19.500 24.200z" fill="#2f8fa6"/><path d="M11.3 9.600h6.600M11.300 13.500h6.600M11.300 17.400h4.600" stroke="#2f8fa6" stroke-width="1.400" fill="none"/></g></svg>
<span class="t" style="left:215.56px;top:1010.00px;font-size:19.5px;line-height:19.5px;letter-spacing:0.303px;z-index:4;">Trigger Functions</span>
<svg class="i ch" viewBox="0 0 8 12" style="left:162.1px;top:1052.0px;width:8.6px;height:13.4px"><path d="M1.3 1.2 6.2 6 1.3 10.8"/></svg>
<svg class="i ti" viewBox="0 0 24 24" style="left:184px;top:1043px;width:24px;height:24px"><rect x="3.700" y="3.700" width="12.500" height="13" fill="#d6f8e6" stroke="#58c698" stroke-width="1.400"/><rect x="7.700" y="7.400" width="12.500" height="12.800" fill="#d6f8e6" stroke="#58c698" stroke-width="1.400"/><path d="M7 16.500V6.900h8.500" fill="none" stroke="#9cc4da" stroke-width=".8"/></svg>
<span class="t" style="left:215.56px;top:1046.00px;font-size:19.5px;line-height:19.5px;letter-spacing:0.229px;z-index:4;">Types</span>
<svg class="i ch" viewBox="0 0 8 12" style="left:162.1px;top:1088.0px;width:8.6px;height:13.4px"><path d="M1.3 1.2 6.2 6 1.3 10.8"/></svg>
<svg class="i ti" viewBox="0 0 24 24" style="left:184px;top:1079px;width:24px;height:24px"><rect x="1.8" y="1.900" width="16.600" height="16.400" fill="#dcf890" stroke="#90c420" stroke-width="1.5"/><rect x="5.500" y="5.500" width="16.700" height="16.700" fill="#dcf890" stroke="#90c420" stroke-width="1.5"/><rect x="8.700" y="8.700" width="10.400" height="10.400" fill="none" stroke="#90c420" stroke-width="1.3"/><rect x="11.700" y="11.600" width="4.400" height="4.400" fill="none" stroke="#90c420" stroke-width="1.3"/></svg>
<span class="t" style="left:215.91px;top:1082.00px;font-size:19.5px;line-height:19.5px;letter-spacing:0.432px;z-index:4;">Views</span>
<svg class="i ch" viewBox="0 0 8 12" style="left:114.1px;top:1124.0px;width:8.6px;height:13.4px"><path d="M1.3 1.2 6.2 6 1.3 10.8"/></svg>
<svg class="i ti" viewBox="0 0 24 24" style="left:136px;top:1115px;width:24px;height:24px"><g transform="translate(24 0) scale(-1 1)"><path d="M5.5 4.7 19.2 17.9C16.5 22.9 9 26.3 2.9 21.4-2.2 16.6-1.2 8.6 5.5 4.7z" fill="#fbe9d4" stroke="#e6942c" stroke-width="1.2" stroke-linejoin="round"/><path d="M4 6.2C1.2 13.5 6.5 21.4 15.6 21.3" fill="none" stroke="#e6942c" stroke-width="1.1"/><path d="M12.4 11.2 15.2 8.9" stroke="#e6942c" stroke-width="1.2"/><circle cx="15.6" cy="8.5" r="1.7" fill="#e6942c"/><path d="M16.7 3.5c2.3.6 3.7 2.1 4 4.3M16.2-.4c4.6.6 7.8 3.6 8.5 8.2" fill="none" stroke="#e6942c" stroke-width="1.1" stroke-linecap="round"/></g></svg>
<span class="t" style="left:167.61px;top:1118.00px;font-size:19.5px;line-height:19.5px;letter-spacing:0.403px;z-index:4;">Subscriptions</span>
</div>
<div id="lhead"></div>
<span class="t" style="left:14.81px;top:16.00px;font-size:21px;line-height:21px;letter-spacing:0.058px;z-index:6;">Object Explorer</span>
<div style="left:314.30px;top:10.20px;width:37.40px;height:34.60px;border:1px solid #dde0e6;border-radius:6px;background:#fff;box-sizing:border-box;z-index:6"></div>
<svg class="i" viewBox="0 0 22.2 23.9" preserveAspectRatio="none" style="left:321.00px;top:17.00px;width:22.40px;height:23.70px;fill:#222;color:#222;z-index:7;"><path d="M0 4.300C0 1.900 4.500 0 10 0s10 1.900 10 4.300V18.300c0 2.400-4.500 4.300-10 4.300S0 20.700 0 18.300z"/><path d="M-.4 6.600c1.200 2.200 5.400 3.300 10.400 3.300s9.200-1.100 10.400-3.300M-.4 13.600c1.200 2.200 5.400 3.300 10.400 3.300" fill="none" stroke="#fff" stroke-width="1.250"/><path d="M10.200 9.200 24.800 17.700 10.200 26.200z" fill="#fff"/><path d="M11.500 11.600 22.200 17.700 11.500 23.900z"/></svg>
<div style="left:358.30px;top:10.20px;width:37.40px;height:34.60px;border:1px solid #dde0e6;border-radius:6px;background:#fff;box-sizing:border-box;z-index:6"></div>
<svg class="i" viewBox="0 0 24.1 19.9" preserveAspectRatio="none" style="left:364.40px;top:21.00px;width:24.10px;height:19.90px;fill:#222;color:#222;z-index:7;"><path fill-rule="evenodd" d="M1.500 0h21.100q1.500 0 1.500 1.500v16.900q0 1.500-1.500 1.500H1.500q-1.500 0-1.500-1.500V1.500Q0 0 1.500 0zM1.700 3.200v4.200h5.700V3.200zm7.600 0v4.200h5.700V3.200zm7.500 0v4.200h5.600V3.200zM1.700 9v4.100h5.700V9zm7.600 0v4.100h5.700V9zm7.500 0v4.100h5.600V9zM1.700 14.600v3.700h5.700v-3.700zm7.600 0v3.700h5.700v-3.700zm7.500 0v3.700h5.600v-3.700z"/></svg>
<div style="left:402.30px;top:10.20px;width:37.40px;height:34.60px;border:1px solid #dde0e6;border-radius:6px;background:#fff;box-sizing:border-box;z-index:6"></div>
<svg class="i" viewBox="0 0 24.4 17.9" preserveAspectRatio="none" style="left:408.20px;top:20.00px;width:24.40px;height:17.90px;fill:#222;color:#222;z-index:7;"><path d="M0 0H19V.9L11.100 9V17.900L8 16.200V9L0 .9z"/><path d="M11.100 6.400h13.300v11.500H11.100z" fill="#fff"/><path fill-rule="evenodd" d="M12.700 7h10.800q.9 0 .9.900v9.100q0 .9-.9.900H12.700q-.9 0-.9-.9V7.900q0-.9.900-.9zm.6 3.400v2h3.900v-2zm5.500 0v2h3.900v-2zm-5.500 3.300v2h3.900v-2zm5.500 0v2h3.900v-2z"/></svg>
<div style="left:446.30px;top:10.20px;width:37.40px;height:34.60px;border:1px solid #dde0e6;border-radius:6px;background:#fff;box-sizing:border-box;z-index:6"></div>
<svg class="i" viewBox="2.51 2.50 19.37 18.95" preserveAspectRatio="none" style="left:453.00px;top:14.90px;width:23.30px;height:24.00px;fill:#222;color:#222;z-index:7;"><path d="M10 2.500a7.500 7.500 0 1 0 4.550 13.470l5.100 5.100a1.300 1.300 0 0 0 1.850-1.850l-5.100-5.100A7.500 7.500 0 0 0 10 2.500zm0 2.700a4.800 4.800 0 1 1 0 9.600 4.800 4.800 0 0 1 0-9.600z"/></svg>
<div style="left:490.30px;top:10.20px;width:37.40px;height:34.60px;border:1px solid #dde0e6;border-radius:6px;background:#fff;box-sizing:border-box;z-index:6"></div>
<svg class="i" viewBox="2.60 3.60 19.10 16.20" preserveAspectRatio="none" style="left:495.00px;top:18.10px;width:26.90px;height:18.20px;fill:#222;color:#222;z-index:7;"><path d="M2.600 5.300 4.300 3.600 12 11.300 4.300 19 2.600 17.300l6-6zM11.500 17.400h10.200v2.400H11.500z"/></svg>
<div style="left:510.00px;top:52.00px;width:24.00px;height:1094.00px;background:#f2f3f6;z-index:5"></div>
<div style="left:516.00px;top:337.00px;width:12.00px;height:645.00px;background:#cbcfdb;border-radius:6px;z-index:6"></div>
</div>
<div id="right">
<span class="t" style="left:549.18px;top:16.00px;font-size:21px;line-height:21px;letter-spacing:0.255px;">Dashboard</span>
<span class="t" style="left:682.78px;top:16.00px;font-size:21px;line-height:21px;letter-spacing:0.430px;">Properties</span>
<span class="t" style="left:812.25px;top:16.00px;font-size:21px;line-height:21px;letter-spacing:-0.588px;transform:scaleX(0.9542);transform-origin:0.95px 0;">SQL</span>
<span class="t" style="left:880.55px;top:16.00px;font-size:21px;line-height:21px;letter-spacing:0.688px;">Statistics</span>
<span class="t" style="left:999.88px;top:16.00px;font-size:21px;line-height:21px;letter-spacing:0.129px;">Dependencies</span>
<span class="t" style="left:1164.68px;top:16.00px;font-size:21px;line-height:21px;letter-spacing:0.158px;">Dependents</span>
<span class="t" style="left:1308.28px;top:16.00px;font-size:21px;line-height:21px;letter-spacing:0.343px;">Processes</span>
<svg class="i" viewBox="0 0 22.2 23.9" preserveAspectRatio="none" style="left:1440.20px;top:17.00px;width:19.50px;height:20.60px;fill:#222;color:#222;"><path d="M0 4.300C0 1.900 4.500 0 10 0s10 1.900 10 4.300V18.300c0 2.400-4.500 4.300-10 4.300S0 20.700 0 18.300z"/><path d="M-.4 6.600c1.200 2.200 5.400 3.300 10.400 3.300s9.200-1.100 10.400-3.300M-.4 13.600c1.200 2.200 5.400 3.300 10.400 3.300" fill="none" stroke="#fff" stroke-width="1.250"/><path d="M10.200 9.200 24.800 17.700 10.200 26.200z" fill="#fff"/><path d="M11.500 11.600 22.200 17.700 11.500 23.900z"/></svg>
<span class="t" style="left:1466.95px;top:16.00px;font-size:21px;line-height:21px;letter-spacing:0.023px;">yourdatabase/…</span>
<svg class="i" viewBox="0 0 24.1 19.9" preserveAspectRatio="none" style="left:1657.00px;top:20.00px;width:20.90px;height:17.50px;fill:#222;color:#222;"><path fill-rule="evenodd" d="M1.500 0h21.100q1.500 0 1.500 1.500v16.900q0 1.500-1.500 1.500H1.500q-1.500 0-1.500-1.500V1.500Q0 0 1.500 0zM1.700 3.200v4.200h5.700V3.200zm7.600 0v4.200h5.700V3.200zm7.500 0v4.200h5.600V3.200zM1.700 9v4.100h5.700V9zm7.600 0v4.100h5.700V9zm7.500 0v4.100h5.600V9zM1.700 14.600v3.700h5.700v-3.700zm7.600 0v3.700h5.700v-3.700zm7.500 0v3.700h5.600v-3.700z"/></svg>
<span class="t" style="left:1683.95px;top:16.00px;font-size:21px;line-height:21px;letter-spacing:0.137px;">public.Book/yo…</span>
<div style="left:1859.00px;top:45.00px;width:160.00px;height:4.00px;background:#326690"></div>
<svg class="i" viewBox="0 0 24.1 19.9" preserveAspectRatio="none" style="left:1874.70px;top:20.20px;width:20.90px;height:17.50px;fill:#326690;color:#326690;"><path fill-rule="evenodd" d="M1.500 0h21.100q1.500 0 1.500 1.500v16.900q0 1.500-1.500 1.500H1.500q-1.500 0-1.500-1.500V1.500Q0 0 1.500 0zM1.700 3.200v4.200h5.700V3.200zm7.600 0v4.200h5.700V3.200zm7.500 0v4.200h5.600V3.200zM1.700 9v4.100h5.700V9zm7.600 0v4.100h5.700V9zm7.500 0v4.100h5.600V9zM1.700 14.600v3.700h5.700v-3.700zm7.600 0v3.700h5.700v-3.700zm7.500 0v3.700h5.600v-3.700z"/></svg>
<span class="t" style="left:1901.25px;top:16.00px;font-size:21px;line-height:21px;color:#326690;white-space:nowrap;">public.Product/yo…</span>
<div style="left:535.00px;top:51.00px;width:1471.00px;height:1.00px;background:#dde0e6"></div>
<div style="left:535.00px;top:52.00px;width:1471.00px;height:101.50px;background:#ebeef3"></div>
<div style="left:535.00px;top:153.00px;width:1471.00px;height:1.00px;background:#dde0e6"></div>
<div style="left:540.40px;top:55.50px;width:771.00px;height:41.50px;border:1px solid #bac1cd;border-radius:6px;background:#fff;box-sizing:border-box"></div>
<div style="left:588.70px;top:56.00px;width:1.00px;height:40.50px;background:#bac1cd"></div>
<div style="left:1261.90px;top:56.00px;width:1.00px;height:40.50px;background:#bac1cd"></div>
<svg class="i" viewBox="-13 -13 26 26" preserveAspectRatio="none" style="left:552.30px;top:63.40px;width:25.30px;height:25.00px;fill:#222;color:#222;"><g transform="rotate(-45)" fill="none" stroke="currentColor" stroke-width="2.100" stroke-linecap="butt"><path d="M-17.300 0H-12.500M12.500 0H17.300M-2.600-8.900V8.900M2.600-8.900V8.900M-2.600-2.700H2.600M-2.600 2.700H2.600"/><path d="M-2.600-6.400H-7.500Q-12.500-6.400-12.500-1.400V1.400Q-12.500 6.400-7.500 6.400H-2.600M2.600-6.400H7.500Q12.500-6.400 12.500-1.400V1.400Q12.500 6.400 7.500 6.400H2.600"/></g></svg>
<span class="t" style="left:602.45px;top:65.00px;font-size:21px;line-height:21px;letter-spacing:0.702px;">public.Product/yourdatabase/yourusername@demo_product</span>
<svg class="i" viewBox="0 0 22.2 23.9" preserveAspectRatio="none" style="left:1275.90px;top:64.00px;width:22.20px;height:23.90px;fill:#222;color:#222;"><path d="M0 4.300C0 1.900 4.500 0 10 0s10 1.900 10 4.300V18.300c0 2.400-4.500 4.300-10 4.300S0 20.700 0 18.300z"/><path d="M-.4 6.600c1.200 2.200 5.400 3.300 10.400 3.300s9.200-1.100 10.400-3.300M-.4 13.600c1.200 2.200 5.400 3.300 10.400 3.300" fill="none" stroke="#fff" stroke-width="1.250"/><path d="M10.200 9.200 24.800 17.700 10.200 26.200z" fill="#fff"/><path d="M11.500 11.600 22.200 17.700 11.500 23.900z"/></svg>
<div style="left:540.40px;top:105.30px;width:126.20px;height:41.40px;border:1px solid #d3d8e1;border-radius:6px;background:#f6f7fa;box-sizing:border-box"></div>
<div style="left:588.70px;top:105.80px;width:1.00px;height:40.40px;background:#d3d8e1"></div>
<div style="left:637.20px;top:105.80px;width:1.00px;height:40.40px;background:#d3d8e1"></div>
<svg class="i" viewBox="2.00 4.00 20.00 16.00" preserveAspectRatio="none" style="left:552.90px;top:117.20px;width:24.00px;height:19.00px;fill:#757575;color:#757575;"><path d="M10.59 4.59C10.21 4.21 9.7 4 9.17 4H4c-1.1 0-1.99.9-1.99 2L2 18c0 1.1.9 2 2 2h16c1.1 0 2-.9 2-2V8c0-1.1-.9-2-2-2h-8l-1.41-1.41z"/></svg>
<svg class="i" viewBox="3.00 3.00 18.00 18.00" preserveAspectRatio="none" style="left:603.20px;top:115.30px;width:21.90px;height:22.30px;fill:#757575;color:#757575;"><path d="M17.59 3.59c-.38-.38-.89-.59-1.42-.59H5c-1.11 0-2 .9-2 2v14c0 1.1.9 2 2 2h14c1.1 0 2-.9 2-2V7.83c0-.53-.21-1.04-.59-1.41l-2.82-2.83zM12 19c-1.66 0-3-1.34-3-3s1.34-3 3-3 3 1.34 3 3-1.34 3-3 3zm1-10H7c-1.1 0-2-.9-2-2s.9-2 2-2h6c1.1 0 2 .9 2 2s-.9 2-2 2z"/></svg>
<svg class="i" viewBox="6.00 8.59 12.00 7.41" preserveAspectRatio="none" style="left:645.30px;top:122.00px;width:13.30px;height:8.60px;fill:#757575;color:#757575;"><path d="M7.41 8.59L12 13.17l4.59-4.58L18 10l-6 6-6-6 1.41-1.41z"/></svg>
<div style="left:673.20px;top:105.30px;width:70.20px;height:41.40px;border:1px solid #d3d8e1;border-radius:6px;background:#f6f7fa;box-sizing:border-box"></div>
<svg class="i" viewBox="3.00 3.00 18.00 18.00" preserveAspectRatio="none" style="left:687.10px;top:115.30px;width:21.80px;height:22.30px;fill:#757575;color:#757575;"><path d="M3 17.46v3.04c0 .28.22.5.5.5h3.04c.13 0 .26-.05.35-.15L17.81 9.94l-3.75-3.75L3.15 17.1c-.1.1-.15.22-.15.36zM20.71 7.04c.39-.39.39-1.02 0-1.41l-2.34-2.34c-.39-.39-1.02-.39-1.41 0l-1.83 1.83 3.75 3.75 1.83-1.83z"/></svg>
<svg class="i" viewBox="6.00 8.59 12.00 7.41" preserveAspectRatio="none" style="left:712.50px;top:122.00px;width:13.50px;height:8.60px;fill:#757575;color:#757575;"><path d="M7.41 8.59L12 13.17l4.59-4.58L18 10l-6 6-6-6 1.41-1.41z"/></svg>
<div style="left:750.00px;top:104.90px;width:78.70px;height:42.20px;background:#326690;border-radius:6px"></div>
<svg class="i" viewBox="4.04 4.00 15.92 16.00" preserveAspectRatio="none" style="left:765.30px;top:116.60px;width:19.50px;height:20.00px;fill:#fff;color:#fff;"><path d="M4.25 5.61C6.57 8.59 10 13 10 13v5c0 1.1.9 2 2 2s2-.9 2-2v-5s3.43-4.41 5.75-7.39c.51-.66.04-1.61-.8-1.61H5.04c-.83 0-1.3.95-.79 1.61z"/></svg>
<svg class="i" viewBox="6.00 8.59 12.00 7.41" preserveAspectRatio="none" style="left:807.20px;top:122.00px;width:13.50px;height:8.60px;fill:#fff;color:#fff;"><path d="M7.41 8.59L12 13.17l4.59-4.58L18 10l-6 6-6-6 1.41-1.41z"/></svg>
<div style="left:835.80px;top:103.70px;width:164.30px;height:45.40px;background:#fff;border-radius:6px"></div>
<span class="t" style="left:851.28px;top:115.00px;font-size:21px;line-height:21px;letter-spacing:0.739px;">No limit</span>
<svg class="i" viewBox="0 0 10 5" style="left:965px;top:122.9px;width:14.6px;height:7.4px;fill:#222"><path d="M0 0h10L5 5z"/></svg>
<div style="left:1007.40px;top:105.30px;width:126.10px;height:41.40px;border:1px solid #d3d8e1;border-radius:6px;background:#f6f7fa;box-sizing:border-box"></div>
<div style="left:1054.80px;top:105.80px;width:1.00px;height:40.40px;background:#d3d8e1"></div>
<div style="left:1104.00px;top:105.80px;width:1.00px;height:40.40px;background:#d3d8e1"></div>
<div style="left:1055.30px;top:105.30px;width:49.70px;height:41.40px;border:1px solid #bac1cd;background:#fff;box-sizing:border-box"></div>
<svg class="i" viewBox="6.00 6.00 12.00 12.00" preserveAspectRatio="none" style="left:1023.00px;top:117.00px;width:18.00px;height:17.90px;fill:#757575;color:#757575;"><path d="M8 6h8c1.1 0 2 .9 2 2v8c0 1.1-.9 2-2 2H8c-1.1 0-2-.9-2-2V8c0-1.1.9-2 2-2z"/></svg>
<svg class="i" viewBox="8.00 5.82 10.15 12.36" preserveAspectRatio="none" style="left:1073.60px;top:117.00px;width:15.60px;height:18.50px;fill:#222;color:#222;"><path d="M8 6.82v10.36c0 .79.87 1.27 1.54.84l8.14-5.18c.62-.39.62-1.29 0-1.69L9.54 5.98C8.87 5.55 8 6.03 8 6.82z"/></svg>
<svg class="i" viewBox="6.00 8.59 12.00 7.41" preserveAspectRatio="none" style="left:1112.00px;top:122.70px;width:13.70px;height:8.40px;fill:#757575;color:#757575;"><path d="M7.41 8.59L12 13.17l4.59-4.58L18 10l-6 6-6-6 1.41-1.41z"/></svg>
<div style="left:1140.40px;top:105.30px;width:126.20px;height:41.40px;border:1px solid #d3d8e1;border-radius:6px;background:#f6f7fa;box-sizing:border-box"></div>
<div style="left:1187.90px;top:105.80px;width:1.00px;height:40.40px;background:#d3d8e1"></div>
<div style="left:1237.00px;top:105.80px;width:1.00px;height:40.40px;background:#d3d8e1"></div>
<svg class="i" viewBox="3.00 3.00 18.00 18.00" preserveAspectRatio="none" style="left:1154.00px;top:116.00px;width:22.00px;height:21.50px;fill:#757575;color:#757575;"><path fill-rule="evenodd" d="M5 3h14c1.1 0 2 .9 2 2v14c0 1.1-.9 2-2 2H5c-1.1 0-2-.9-2-2V5c0-1.1.9-2 2-2zm4.2 4.2v9.6h6.1v-1.9h-3.9v-2h3.4v-1.85h-3.4V9.1h3.9V7.2z"/></svg>
<svg class="i" viewBox="3.00 3.00 18.00 18.00" preserveAspectRatio="none" style="left:1202.20px;top:115.90px;width:21.50px;height:21.60px;fill:#757575;color:#757575;"><path d="M19 3H5c-1.1 0-2 .9-2 2v14c0 1.1.9 2 2 2h14c1.1 0 2-.9 2-2V5c0-1.1-.9-2-2-2zM8 17c-.55 0-1-.45-1-1v-5c0-.55.45-1 1-1s1 .45 1 1v5c0 .55-.45 1-1 1zm4 0c-.55 0-1-.45-1-1V8c0-.55.45-1 1-1s1 .45 1 1v8c0 .55-.45 1-1 1zm4 0c-.55 0-1-.45-1-1v-2c0-.55.45-1 1-1s1 .45 1 1v2c0 .55-.45 1-1 1z"/></svg>
<svg class="i" viewBox="6.00 8.59 12.00 7.41" preserveAspectRatio="none" style="left:1245.30px;top:122.70px;width:13.30px;height:8.40px;fill:#757575;color:#757575;"><path d="M7.41 8.59L12 13.17l4.59-4.58L18 10l-6 6-6-6 1.41-1.41z"/></svg>
<div style="left:1273.20px;top:105.30px;width:97.50px;height:41.40px;border:1px solid #d3d8e1;border-radius:6px;background:#f6f7fa;box-sizing:border-box"></div>
<div style="left:1320.90px;top:105.80px;width:1.00px;height:40.40px;background:#d3d8e1"></div>
<svg class="i" viewBox="0 0 25.500 24.200" preserveAspectRatio="none" style="left:1285.20px;top:114.20px;width:25.50px;height:24.20px;fill:#757575;color:#757575;"><ellipse cx="10.900" cy="4.150" rx="10.900" ry="4.150"/><path d="M0 8.700c1.700 2.200 5.900 3.400 10.900 3.400s9.200-1.200 10.900-3.400v3.700c-1.700 2.200-5.900 3.400-10.900 3.400S1.700 14.600 0 12.400z"/><path d="M0 14.300c1.700 2.200 5.900 3.400 10.900 3.400s9.200-1.200 10.900-3.400v2.500c0 2.300-4.900 4.150-10.900 4.150S0 19.100 0 16.800z"/><circle cx="17.700" cy="16.700" r="8.500" fill="#f6f7fa"/><circle cx="17.700" cy="16.700" r="7.350"/><path d="M14 16.900 16.700 19.600 21.700 14.300" fill="none" stroke="#f6f7fa" stroke-width="1.600"/></svg>
<svg class="i" viewBox="0 0 25.500 24.200" preserveAspectRatio="none" style="left:1333.30px;top:114.20px;width:25.50px;height:24.20px;fill:#757575;color:#757575;"><ellipse cx="10.900" cy="4.150" rx="10.900" ry="4.150"/><path d="M0 8.700c1.700 2.200 5.900 3.400 10.900 3.400s9.200-1.200 10.900-3.400v3.700c-1.700 2.200-5.900 3.400-10.900 3.400S1.700 14.600 0 12.400z"/><path d="M0 14.300c1.700 2.200 5.900 3.400 10.900 3.400s9.200-1.200 10.900-3.400v2.500c0 2.300-4.900 4.150-10.900 4.150S0 19.100 0 16.800z"/><circle cx="17.700" cy="16.700" r="8.500" fill="#f6f7fa"/><circle cx="17.700" cy="16.700" r="7.350"/><path d="M12.900 16.200 17.200 12.300v2.300c3.100.3 4.800 2.400 4.900 6-1.100-1.800-2.700-2.700-4.900-2.700v2.300z" fill="#f6f7fa"/></svg>
<div style="left:1377.30px;top:105.30px;width:70.10px;height:41.40px;border:1px solid #d3d8e1;border-radius:6px;background:#f6f7fa;box-sizing:border-box"></div>
<svg class="i" viewBox="2.00 4.00 19.00 16.00" preserveAspectRatio="none" style="left:1389.20px;top:116.90px;width:24.00px;height:19.00px;fill:#757575;color:#757575;"><path d="M8 7h12c.55 0 1-.45 1-1s-.45-1-1-1H8c-.55 0-1 .45-1 1s.45 1 1 1zm12 10H8c-.55 0-1 .45-1 1s.45 1 1 1h12c.55 0 1-.45 1-1s-.45-1-1-1zm0-6H8c-.55 0-1 .45-1 1s.45 1 1 1h12c.55 0 1-.45 1-1s-.45-1-1-1zM4.500 16h-2c-.28 0-.5.22-.5.5s.22.5.5.5H4v.5h-.5c-.28 0-.5.22-.5.5s.22.5.5.5H4v.5H2.500c-.28 0-.5.22-.5.5s.22.5.5.5h2c.28 0 .5-.22.5-.5v-3c0-.28-.22-.5-.5-.5zm-2-11H3v2.500c0 .28.22.5.5.5s.5-.22.5-.5v-3c0-.28-.22-.5-.5-.5h-1c-.28 0-.5.22-.5.5s.22.5.5.5zm2 5h-2c-.28 0-.5.22-.5.5s.22.5.5.5h1.300l-1.680 1.960c-.08.09-.12.21-.12.32v.22c0 .28.22.5.5.5h2c.28 0 .5-.22.5-.5s-.22-.5-.5-.5H3.200l1.680-1.960c.08-.09.12-.21.12-.32v-.22c0-.28-.22-.5-.5-.5z"/></svg>
<svg class="i" viewBox="6.00 8.59 12.00 7.41" preserveAspectRatio="none" style="left:1416.10px;top:122.70px;width:13.60px;height:8.40px;fill:#757575;color:#757575;"><path d="M7.41 8.59L12 13.17l4.59-4.58L18 10l-6 6-6-6 1.41-1.41z"/></svg>
<div style="left:1454.40px;top:105.30px;width:49.10px;height:41.40px;border:1px solid #bac1cd;border-radius:6px;background:#fff;box-sizing:border-box"></div>
<svg class="i" viewBox="2.00 2.00 20.00 20.00" preserveAspectRatio="none" style="left:1467.00px;top:114.50px;width:23.90px;height:24.00px;fill:#222;color:#222;"><path d="M12 2C6.48 2 2 6.48 2 12s4.48 10 10 10 10-4.48 10-10S17.52 2 12 2zm1 17h-2v-2h2v2zm2.070-7.750l-.9.92C13.450 12.900 13 13.500 13 15h-2v-.5c0-1.100.45-2.100 1.170-2.830l1.240-1.260c.37-.36.59-.86.59-1.410 0-1.100-.9-2-2-2s-2 .9-2 2H8c0-2.210 1.790-4 4-4s4 1.790 4 4c0 .88-.36 1.680-.93 2.250z"/></svg>
<span class="t" style="left:548.51px;top:165.00px;font-size:21px;line-height:21px;letter-spacing:-0.463px;">Query</span>
<span class="t" style="left:634.11px;top:165.00px;font-size:21px;line-height:21px;letter-spacing:0.040px;">Query History</span>
<div style="left:535.00px;top:194.40px;width:85.00px;height:4.60px;background:#326690"></div>
<div style="left:535.00px;top:199.00px;width:1471.00px;height:1.00px;background:#dde0e6"></div>
<svg class="i" viewBox="2.00 2.00 20.00 20.00" preserveAspectRatio="none" style="left:1963.60px;top:166.40px;width:19.50px;height:19.20px;fill:#222;color:#222;"><path d="M13.600 2h8.400v8.400l-3.100-3.100-11.600 11.600 3.100 3.100H2v-8.400l3.100 3.100L16.700 5.100z"/></svg>
<div style="left:535.00px;top:200.00px;width:61.00px;height:86.00px;background:#ebeef3"></div>
<span class="t m" style="top:211.00px;font-size:21.39px;line-height:21.39px;color:#990088;left:603.00px;white-space:pre;-webkit-text-stroke:0.65px #990088;">SELECT</span>
<span class="t m" style="top:211.00px;font-size:21.39px;line-height:21.39px;left:680.02px;white-space:pre;"> * </span>
<span class="t m" style="top:211.00px;font-size:21.39px;line-height:21.39px;color:#990088;left:718.52px;white-space:pre;-webkit-text-stroke:0.65px #990088;">FROM</span>
<span class="t m" style="top:211.00px;font-size:21.39px;line-height:21.39px;left:769.87px;white-space:pre;"> </span>
<span class="t m" style="top:211.00px;font-size:21.39px;line-height:21.39px;color:#990088;left:782.70px;white-space:pre;-webkit-text-stroke:0.65px #990088;">public</span>
<span class="t m" style="top:211.00px;font-size:21.39px;line-height:21.39px;left:859.72px;white-space:pre;">.&quot;Product&quot;</span>
<span class="t m" style="top:242.00px;font-size:21.39px;line-height:21.39px;color:#990088;left:603.00px;white-space:pre;-webkit-text-stroke:0.65px #990088;">ORDER BY</span>
<span class="t m" style="top:242.00px;font-size:21.39px;line-height:21.39px;left:705.69px;white-space:pre;"> </span>
<span class="t m" style="top:242.00px;font-size:21.39px;line-height:21.39px;color:#990088;left:718.52px;white-space:pre;-webkit-text-stroke:0.65px #990088;">id</span>
<span class="t m" style="top:242.00px;font-size:21.39px;line-height:21.39px;left:744.20px;white-space:pre;"> </span>
<span class="t m" style="top:242.00px;font-size:21.39px;line-height:21.39px;color:#990088;left:757.03px;white-space:pre;-webkit-text-stroke:0.65px #990088;">ASC</span>
<span class="t m" style="top:211.00px;font-size:21.39px;line-height:21.39px;left:560.5px;">1</span>
<span class="t m" style="top:242.00px;font-size:21.39px;line-height:21.39px;left:560.5px;">2</span>
<div style="left:535.00px;top:286.00px;width:1471.00px;height:2.00px;background:#dde0e6"></div>
<span class="t" style="left:547.78px;top:298.00px;font-size:21px;line-height:21px;letter-spacing:0.174px;">Data Output</span>
<span class="t" style="left:692.18px;top:298.00px;font-size:21px;line-height:21px;letter-spacing:0.439px;">Messages</span>
<span class="t" style="left:819.98px;top:298.00px;font-size:21px;line-height:21px;letter-spacing:0.825px;">Notifications</span>
<div style="left:535.00px;top:327.80px;width:143.00px;height:4.40px;background:#326690"></div>
<div style="left:535.00px;top:332.00px;width:1471.00px;height:49.50px;background:#ebeef3"></div>
<div style="left:535.00px;top:381.00px;width:1471.00px;height:1.00px;background:#dde0e6"></div>
<div style="left:537.60px;top:336.40px;width:252.00px;height:41.30px;border:1px solid #d3d8e1;border-radius:6px;background:#f6f7fa;box-sizing:border-box"></div>
<div style="left:585.90px;top:336.90px;width:1.00px;height:40.30px;background:#d3d8e1"></div>
<div style="left:633.80px;top:336.90px;width:1.00px;height:40.30px;background:#d3d8e1"></div>
<div style="left:662.90px;top:336.90px;width:1.00px;height:40.30px;background:#d3d8e1"></div>
<div style="left:710.80px;top:336.90px;width:1.00px;height:40.30px;background:#d3d8e1"></div>
<div style="left:739.90px;top:336.90px;width:1.00px;height:40.30px;background:#d3d8e1"></div>
<div style="left:537.60px;top:336.40px;width:49.30px;height:41.30px;border:1px solid #bac1cd;background:#fff;box-sizing:border-box;border-radius:6px 0 0 6px"></div>
<div style="left:633.80px;top:336.40px;width:29.60px;height:41.30px;border:1px solid #bac1cd;background:#fff;box-sizing:border-box"></div>
<div style="left:662.90px;top:336.40px;width:48.40px;height:41.30px;border:1px solid #bac1cd;background:#fff;box-sizing:border-box"></div>
<div style="left:710.80px;top:336.40px;width:29.60px;height:41.30px;border:1px solid #bac1cd;background:#fff;box-sizing:border-box"></div>
<svg class="i" viewBox="2.00 6.00 20.00 14.00" preserveAspectRatio="none" style="left:547.00px;top:347.80px;width:29.90px;height:20.90px;fill:#222;color:#222;"><path d="M13 10H3c-.55 0-1 .45-1 1s.45 1 1 1h10c.55 0 1-.45 1-1s-.45-1-1-1zm0-4H3c-.55 0-1 .45-1 1s.45 1 1 1h10c.55 0 1-.45 1-1s-.45-1-1-1zm5 8v-3c0-.55-.45-1-1-1s-1 .45-1 1v3h-3c-.55 0-1 .45-1 1s.45 1 1 1h3v3c0 .55.45 1 1 1s1-.45 1-1v-3h3c.55 0 1-.45 1-1s-.45-1-1-1h-3zM3 16h6c.55 0 1-.45 1-1s-.45-1-1-1H3c-.55 0-1 .45-1 1s.45 1 1 1z"/></svg>
<svg class="i" viewBox="2.00 1.00 19.00 22.00" preserveAspectRatio="none" style="left:598.80px;top:344.20px;width:23.30px;height:25.50px;fill:#757575;color:#757575;"><path d="M15 1H4c-1.100 0-2 .9-2 2v13c0 .55.45 1 1 1s1-.45 1-1V4c0-.55.45-1 1-1h10c.55 0 1-.45 1-1s-.45-1-1-1zm.59 4.590l4.830 4.830c.37.37.58.88.58 1.410V21c0 1.100-.9 2-2 2H7.990C6.890 23 6 22.100 6 21l.01-14c0-1.100.89-2 1.990-2h6.170c.53 0 1.040.21 1.420.59zM15 12h4.500L14 6.500V11c0 .55.45 1 1 1z"/></svg>
<svg class="i" viewBox="6.00 8.59 12.00 7.41" preserveAspectRatio="none" style="left:642.10px;top:353.40px;width:13.90px;height:8.40px;fill:#222;color:#222;"><path d="M7.41 8.59L12 13.17l4.59-4.58L18 10l-6 6-6-6 1.41-1.41z"/></svg>
<svg class="i" viewBox="3.00 0.00 18.00 22.00" preserveAspectRatio="none" style="left:677.00px;top:343.40px;width:22.10px;height:24.90px;fill:#222;color:#222;"><path d="M19 2h-4.180C14.400.84 13.300 0 12 0S9.600.84 9.180 2H5c-1.100 0-2 .9-2 2v16c0 1.100.9 2 2 2h14c1.100 0 2-.9 2-2V4c0-1.100-.9-2-2-2zm-7 0c.55 0 1 .45 1 1s-.45 1-1 1-1-.45-1-1 .45-1 1-1zm6 18H6c-.55 0-1-.45-1-1V5c0-.55.45-1 1-1h1v1c0 1.100.9 2 2 2h6c1.100 0 2-.9 2-2V4h1c.55 0 1 .45 1 1v14c0 .55-.45 1-1 1z"/></svg>
<svg class="i" viewBox="6.00 8.59 12.00 7.41" preserveAspectRatio="none" style="left:718.80px;top:353.40px;width:14.20px;height:8.40px;fill:#222;color:#222;"><path d="M7.41 8.59L12 13.17l4.59-4.58L18 10l-6 6-6-6 1.41-1.41z"/></svg>
<svg class="i" viewBox="5.00 3.00 14.00 18.00" preserveAspectRatio="none" style="left:756.90px;top:346.80px;width:16.80px;height:20.90px;fill:#757575;color:#757575;"><path d="M6 19c0 1.100.9 2 2 2h8c1.100 0 2-.9 2-2V9c0-1.100-.9-2-2-2H8c-1.100 0-2 .9-2 2v10zM18 4h-2.500l-.71-.71c-.18-.18-.44-.29-.7-.29H9.910c-.26 0-.52.11-.7.29L8.500 4H6c-.55 0-1 .45-1 1s.45 1 1 1h12c.55 0 1-.45 1-1s-.45-1-1-1z"/></svg>
<div style="left:796.20px;top:336.40px;width:49.30px;height:41.30px;border:1px solid #d3d8e1;border-radius:6px;background:#f6f7fa;box-sizing:border-box"></div>
<svg class="i" viewBox="0 0 20 22.300" preserveAspectRatio="none" style="left:810.90px;top:345.80px;width:20.00px;height:22.30px;fill:#757575;color:#757575;"><ellipse cx="9.300" cy="3.600" rx="9.300" ry="3.600"/><path d="M0 7.200c1.500 1.900 5 2.900 9.300 2.900s7.800-1 9.300-2.900v3.800c-1.500 1.900-5 2.900-9.300 2.900S1.500 12.900 0 11z"/><path d="M0 12.800c1.500 1.900 5 2.900 9.300 2.900s7.800-1 9.300-2.900v4.800c0 2-4.200 3.600-9.300 3.600S0 19.600 0 17.600z"/><path d="M7.100 9.900h11l3 3v10.500h-14z" fill="#f6f7fa"/><path fill-rule="evenodd" d="M9 10.900h8.300l2.700 2.700v7.800q0 .9-.9.900H9q-.9 0-.9-.9v-9.600q0-.9.900-.9zm1 1.600v2.700h6.500v-2.700zm3.900 4.800a1.750 1.750 0 1 0 0 3.500 1.750 1.750 0 0 0 0-3.500z"/></svg>
<div style="left:852.00px;top:336.40px;width:49.60px;height:41.30px;border:1px solid #d3d8e1;border-radius:6px;background:#f6f7fa;box-sizing:border-box"></div>
<svg class="i" viewBox="5.00 3.00 14.00 17.00" preserveAspectRatio="none" style="left:868.40px;top:346.80px;width:16.90px;height:19.30px;fill:#757575;color:#757575;"><path d="M16.590 9H15V4c0-.55-.45-1-1-1h-4c-.55 0-1 .45-1 1v5H7.410c-.89 0-1.340 1.080-.71 1.710l4.590 4.590c.39.39 1.020.39 1.410 0l4.590-4.590c.63-.63.19-1.710-.7-1.710zM5 19c0 .55.45 1 1 1h12c.55 0 1-.45 1-1s-.45-1-1-1H6c-.55 0-1 .45-1 1z"/></svg>
<div style="left:908.20px;top:336.40px;width:49.50px;height:41.30px;border:1px solid #d3d8e1;border-radius:6px;background:#f6f7fa;box-sizing:border-box"></div>
<svg class="i" viewBox="1.00 6.00 22.00 12.00" preserveAspectRatio="none" style="left:919.80px;top:350.00px;width:26.50px;height:13.90px;fill:#757575;color:#757575;"><path d="M23 8c0 1.100-.9 2-2 2-.18 0-.35-.02-.51-.07l-3.560 3.550c.05.16.07.34.07.52 0 1.100-.9 2-2 2s-2-.9-2-2c0-.18.02-.36.07-.52l-2.550-2.550c-.16.05-.34.07-.52.07s-.36-.02-.52-.07l-4.550 4.560c.05.16.07.33.07.51 0 1.100-.9 2-2 2s-2-.9-2-2 .9-2 2-2c.18 0 .35.02.51.07l4.560-4.550C8.020 9.360 8 9.180 8 9c0-1.100.9-2 2-2s2 .9 2 2c0 .18-.02.36-.07.52l2.550 2.550c.16-.05.34-.07.52-.07s.36.02.52.07l3.550-3.560C19.020 8.350 19 8.180 19 8c0-1.100.9-2 2-2s2 .9 2 2z"/></svg>
<div style="left:535.00px;top:441.00px;width:1403.50px;height:1.00px;background:#dde0e6"></div>
<div style="left:601.00px;top:382.00px;width:1.00px;height:59.00px;background:#dde0e6;box-shadow:2px 0 4px rgba(0,0,0,.10)"></div>
<div style="left:865.10px;top:382.00px;width:1.00px;height:59.00px;background:#dde0e6"></div>
<div style="left:1007.00px;top:382.00px;width:1.00px;height:59.00px;background:#dde0e6"></div>
<div style="left:1191.00px;top:382.00px;width:1.00px;height:59.00px;background:#dde0e6"></div>
<div style="left:1310.70px;top:382.00px;width:1.00px;height:59.00px;background:#dde0e6"></div>
<div style="left:1624.70px;top:382.00px;width:1.00px;height:59.00px;background:#dde0e6"></div>
<div style="left:1937.70px;top:382.00px;width:1.00px;height:59.00px;background:#dde0e6"></div>
<span class="t" style="left:610.54px;top:391.00px;font-size:18px;line-height:18px;font-weight:700;letter-spacing:0.647px;">id</span>
<span class="t" style="left:610.52px;top:415.00px;font-size:18px;line-height:18px;letter-spacing:0.112px;">[PK] integer</span>
<svg class="i" viewBox="3.00 3.00 18.00 18.00" preserveAspectRatio="none" style="left:718.40px;top:404.60px;width:16.10px;height:16.40px;fill:#222;color:#222;"><path d="M3 17.46v3.04c0 .28.22.5.5.5h3.04c.13 0 .26-.05.35-.15L17.81 9.94l-3.75-3.75L3.15 17.1c-.1.1-.15.22-.15.36zM20.71 7.04c.39-.39.39-1.02 0-1.41l-2.34-2.34c-.39-.39-1.02-.39-1.41 0l-1.83 1.83 3.75 3.75 1.83-1.83z"/></svg>
<span class="t" style="left:754.11px;top:391.00px;font-size:18px;line-height:18px;font-weight:700;letter-spacing:0.160px;">name</span>
<span class="t" style="left:755.03px;top:415.00px;font-size:18px;line-height:18px;letter-spacing:0.531px;">text</span>
<svg class="i" viewBox="3.00 3.00 18.00 18.00" preserveAspectRatio="none" style="left:837.00px;top:404.60px;width:16.10px;height:16.40px;fill:#222;color:#222;"><path d="M3 17.46v3.04c0 .28.22.5.5.5h3.04c.13 0 .26-.05.35-.15L17.81 9.94l-3.75-3.75L3.15 17.1c-.1.1-.15.22-.15.36zM20.71 7.04c.39-.39.39-1.02 0-1.41l-2.34-2.34c-.39-.39-1.02-.39-1.41 0l-1.83 1.83 3.75 3.75 1.83-1.83z"/></svg>
<span class="t" style="left:874.56px;top:391.00px;font-size:18px;line-height:18px;font-weight:700;letter-spacing:-0.446px;">description</span>
<span class="t" style="left:875.03px;top:415.00px;font-size:18px;line-height:18px;letter-spacing:0.531px;">text</span>
<svg class="i" viewBox="3.00 3.00 18.00 18.00" preserveAspectRatio="none" style="left:979.60px;top:404.60px;width:16.10px;height:16.40px;fill:#222;color:#222;"><path d="M3 17.46v3.04c0 .28.22.5.5.5h3.04c.13 0 .26-.05.35-.15L17.81 9.94l-3.75-3.75L3.15 17.1c-.1.1-.15.22-.15.36zM20.71 7.04c.39-.39.39-1.02 0-1.41l-2.34-2.34c-.39-.39-1.02-.39-1.41 0l-1.83 1.83 3.75 3.75 1.83-1.83z"/></svg>
<span class="t" style="left:1016.31px;top:391.00px;font-size:18px;line-height:18px;font-weight:700;letter-spacing:-0.180px;">price</span>
<span class="t" style="left:1016.74px;top:415.00px;font-size:18px;line-height:18px;letter-spacing:0.336px;">double precision</span>
<svg class="i" viewBox="3.00 3.00 18.00 18.00" preserveAspectRatio="none" style="left:1163.50px;top:404.60px;width:16.10px;height:16.40px;fill:#222;color:#222;"><path d="M3 17.46v3.04c0 .28.22.5.5.5h3.04c.13 0 .26-.05.35-.15L17.81 9.94l-3.75-3.75L3.15 17.1c-.1.1-.15.22-.15.36zM20.71 7.04c.39-.39.39-1.02 0-1.41l-2.34-2.34c-.39-.39-1.02-.39-1.41 0l-1.83 1.83 3.75 3.75 1.83-1.83z"/></svg>
<span class="t" style="left:1200.66px;top:391.00px;font-size:18px;line-height:18px;font-weight:700;letter-spacing:-0.504px;transform:scaleX(0.9949);transform-origin:0.74px 0;">quantity</span>
<span class="t" style="left:1200.20px;top:415.00px;font-size:18px;line-height:18px;letter-spacing:0.511px;">integer</span>
<svg class="i" viewBox="3.00 3.00 18.00 18.00" preserveAspectRatio="none" style="left:1283.30px;top:404.60px;width:16.10px;height:16.40px;fill:#222;color:#222;"><path d="M3 17.46v3.04c0 .28.22.5.5.5h3.04c.13 0 .26-.05.35-.15L17.81 9.94l-3.75-3.75L3.15 17.1c-.1.1-.15.22-.15.36zM20.71 7.04c.39-.39.39-1.02 0-1.41l-2.34-2.34c-.39-.39-1.02-.39-1.41 0l-1.83 1.83 3.75 3.75 1.83-1.83z"/></svg>
<span class="t" style="left:1320.50px;top:391.00px;font-size:18px;line-height:18px;font-weight:700;letter-spacing:-0.414px;">createdAt</span>
<span class="t" style="left:1320.93px;top:415.00px;font-size:18px;line-height:18px;letter-spacing:0.413px;">timestamp without time zone (3)</span>
<svg class="i" viewBox="3.00 3.00 18.00 18.00" preserveAspectRatio="none" style="left:1597.50px;top:404.60px;width:16.10px;height:16.40px;fill:#222;color:#222;"><path d="M3 17.46v3.04c0 .28.22.5.5.5h3.04c.13 0 .26-.05.35-.15L17.81 9.94l-3.75-3.75L3.15 17.1c-.1.1-.15.22-.15.36zM20.71 7.04c.39-.39.39-1.02 0-1.41l-2.34-2.34c-.39-.39-1.02-.39-1.41 0l-1.83 1.83 3.75 3.75 1.83-1.83z"/></svg>
<span class="t" style="left:1634.28px;top:391.00px;font-size:18px;line-height:18px;font-weight:700;letter-spacing:-0.444px;">updatedAt</span>
<span class="t" style="left:1635.13px;top:415.00px;font-size:18px;line-height:18px;letter-spacing:0.416px;">timestamp without time zone (3)</span>
<svg class="i" viewBox="3.00 3.00 18.00 18.00" preserveAspectRatio="none" style="left:1911.30px;top:404.60px;width:16.10px;height:16.40px;fill:#222;color:#222;"><path d="M3 17.46v3.04c0 .28.22.5.5.5h3.04c.13 0 .26-.05.35-.15L17.81 9.94l-3.75-3.75L3.15 17.1c-.1.1-.15.22-.15.36zM20.71 7.04c.39-.39.39-1.02 0-1.41l-2.34-2.34c-.39-.39-1.02-.39-1.41 0l-1.83 1.83 3.75 3.75 1.83-1.83z"/></svg>
</div>
</body></html>
